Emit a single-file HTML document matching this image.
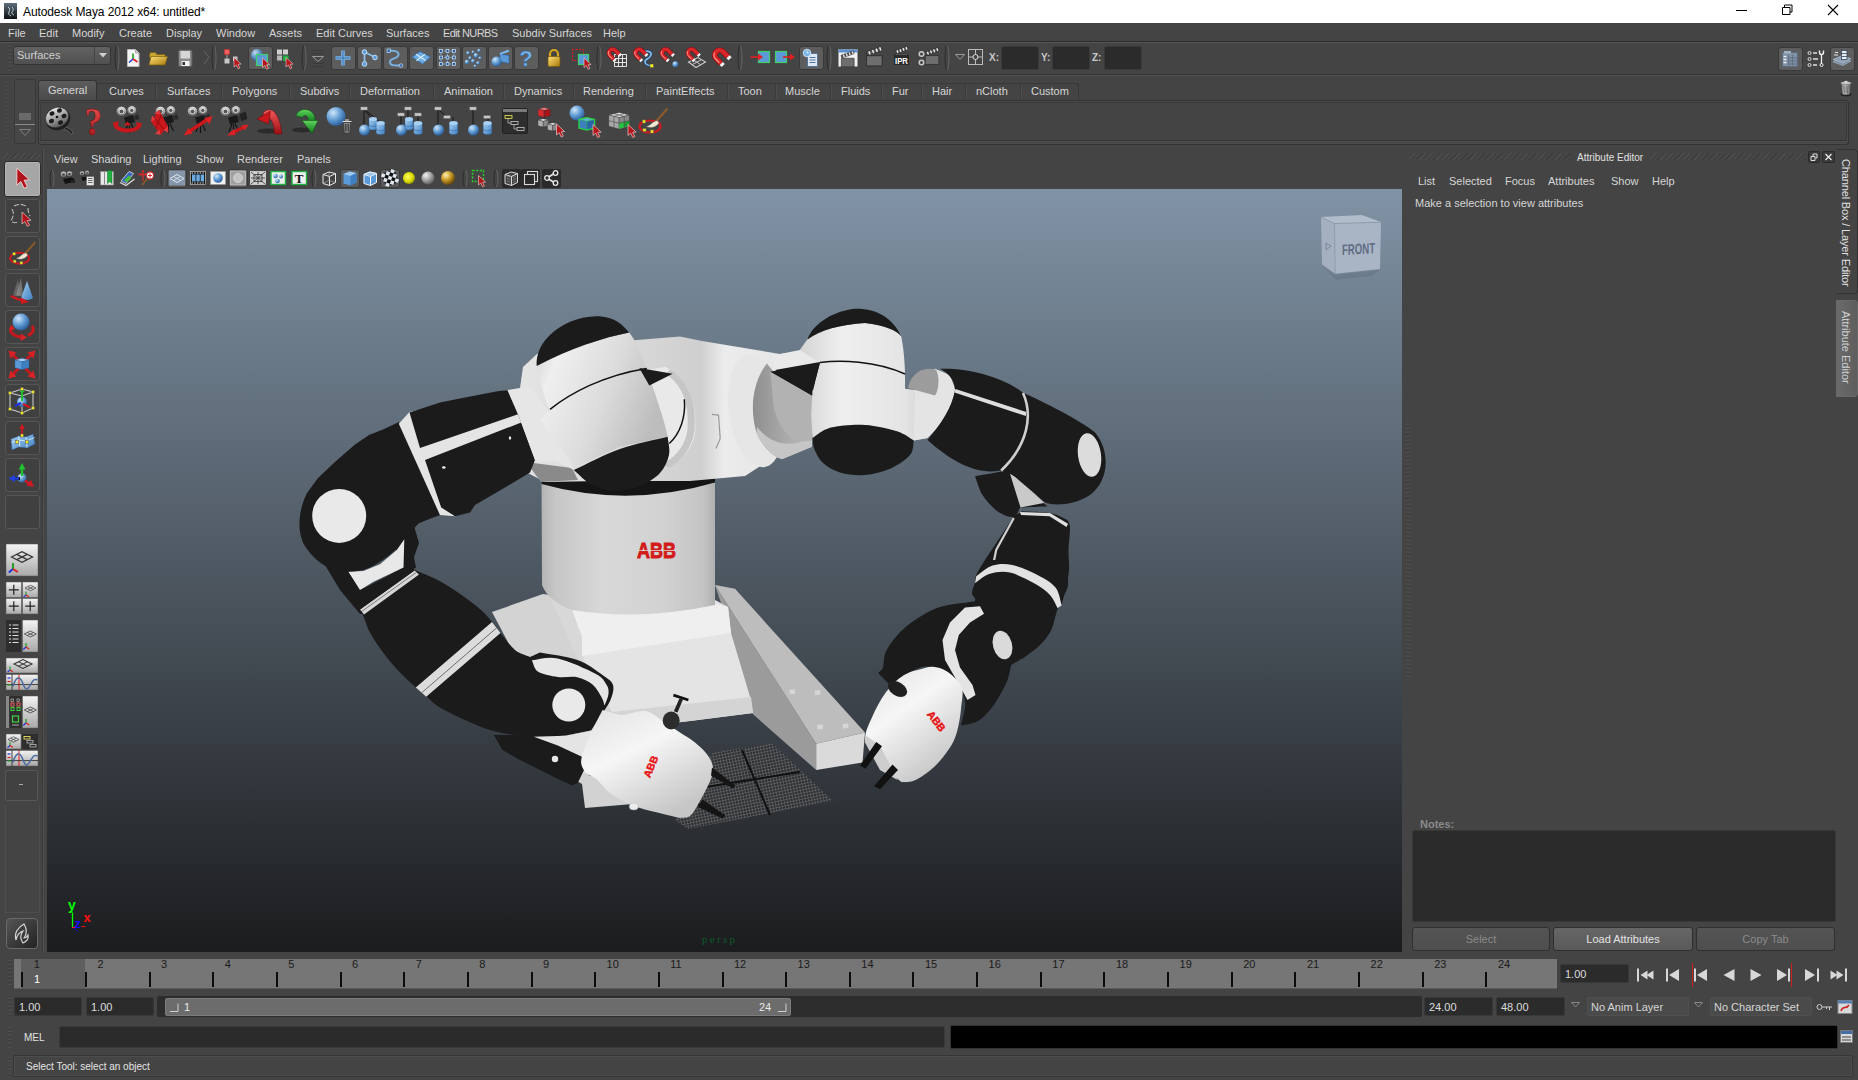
<!DOCTYPE html>
<html><head><meta charset="utf-8"><title>Autodesk Maya 2012 x64: untitled*</title>
<style>
*{box-sizing:border-box;margin:0;padding:0}
html,body{width:1858px;height:1080px;overflow:hidden;background:#444;font-family:"Liberation Sans","DejaVu Sans",sans-serif;font-size:11px;color:#d6d6d6}
.a{position:absolute}
.t{position:absolute;white-space:nowrap;line-height:14px;height:14px}
#title{left:0;top:0;width:1858px;height:23px;background:#fff;color:#000}
#title .t{font-size:12px;left:23px;top:5px;color:#000;letter-spacing:-0.1px}
.fld{position:absolute;background:#2b2b2b;border:1px solid #383838;border-radius:2px;color:#ddd;padding-left:4px;padding-top:1px;line-height:17px}
.hb{position:absolute;background:#5d5d5d;border:1px solid #393939;border-radius:3px}
.sep{position:absolute;width:3px;border-left:1px solid #2e2e2e;border-right:1px solid #5e5e5e}
.btn{position:absolute;border:1px solid #2f2f2f;border-radius:3px;text-align:center;line-height:22px;color:#8a8a8a;background:linear-gradient(#5a5a5a,#4c4c4c)}
.tb{position:absolute;left:5px;width:35px;height:34px;border:1px solid #565656;border-radius:3px;background:#404040}
svg{position:absolute;overflow:visible}
</style></head><body>
<div id="title" class="a"><div class="t">Autodesk Maya 2012 x64: untitled*</div>
<svg style="left:4px;top:3px" width="13" height="16"><defs><linearGradient id="gi" x1="0" y1="0" x2="0" y2="1"><stop offset="0" stop-color="#5d6f7c"/><stop offset="1" stop-color="#0c1014"/></linearGradient></defs><rect width="13" height="16" fill="url(#gi)"/><path d="M4 4c2 1 2 3 1 5s0 3 2 4M8 4c2 2 1 4 0 5s1 3 2 3" stroke="#c9d2d8" stroke-width="1" fill="none"/></svg>
<svg style="left:1730px;top:0" width="128" height="23"><path d="M6 10.5h11" stroke="#000" stroke-width="1"/><path d="M52.500 7.500h7.500v7h-7.500zM54.500 7.500v-2.500h7.500v7h-2" stroke="#000" stroke-width="1" fill="none"/><path d="M98 5l10 10M108 5l-10 10" stroke="#000" stroke-width="1.100"/></svg>
</div>
<div class="t" style="left:8px;top:26px">File</div>
<div class="t" style="left:39px;top:26px">Edit</div>
<div class="t" style="left:72px;top:26px">Modify</div>
<div class="t" style="left:119px;top:26px">Create</div>
<div class="t" style="left:166px;top:26px">Display</div>
<div class="t" style="left:216px;top:26px">Window</div>
<div class="t" style="left:269px;top:26px">Assets</div>
<div class="t" style="left:316px;top:26px">Edit Curves</div>
<div class="t" style="left:386px;top:26px">Surfaces</div>
<div class="t" style="left:443px;top:26px;letter-spacing:-0.6px">Edit NURBS</div>
<div class="t" style="left:512px;top:26px">Subdiv Surfaces</div>
<div class="t" style="left:603px;top:26px">Help</div>
<div class="a" style="left:0;top:41px;width:1858px;height:1px;background:#2c2c2c"></div>
<div class="a" style="left:0;top:42px;width:1858px;height:1px;background:#565656"></div>
<div class="a" style="left:13px;top:46px;width:98px;height:19px;border:1px solid #343434;border-radius:3px;background:linear-gradient(#626262,#505050)"><div class="t" style="left:3px;top:1px;color:#cfcfcf">Surfaces</div><div class="a" style="left:80px;top:0;width:1px;height:17px;background:#444"></div><svg style="left:85px;top:6px" width="9" height="5"><path d="M0 0h8l-4 4.500z" fill="#d0d0d0"/></svg></div>
<svg style="left:113px;top:46px" width="7" height="24"><path d="M3.500 0c-2 6-2 18 0 24" stroke="#2c2c2c" fill="none"/><path d="M4.500 0c2 6 2 18 0 24" stroke="#666" fill="none"/></svg>
<svg style="left:210px;top:46px" width="7" height="24"><path d="M3.500 0c-2 6-2 18 0 24" stroke="#2c2c2c" fill="none"/><path d="M4.500 0c2 6 2 18 0 24" stroke="#666" fill="none"/></svg>
<svg style="left:300px;top:46px" width="7" height="24"><path d="M3.500 0c-2 6-2 18 0 24" stroke="#2c2c2c" fill="none"/><path d="M4.500 0c2 6 2 18 0 24" stroke="#666" fill="none"/></svg>
<svg style="left:595px;top:46px" width="7" height="24"><path d="M3.500 0c-2 6-2 18 0 24" stroke="#2c2c2c" fill="none"/><path d="M4.500 0c2 6 2 18 0 24" stroke="#666" fill="none"/></svg>
<svg style="left:736px;top:46px" width="7" height="24"><path d="M3.500 0c-2 6-2 18 0 24" stroke="#2c2c2c" fill="none"/><path d="M4.500 0c2 6 2 18 0 24" stroke="#666" fill="none"/></svg>
<svg style="left:825px;top:46px" width="7" height="24"><path d="M3.500 0c-2 6-2 18 0 24" stroke="#2c2c2c" fill="none"/><path d="M4.500 0c2 6 2 18 0 24" stroke="#666" fill="none"/></svg>
<svg style="left:943px;top:46px" width="7" height="24"><path d="M3.500 0c-2 6-2 18 0 24" stroke="#2c2c2c" fill="none"/><path d="M4.500 0c2 6 2 18 0 24" stroke="#666" fill="none"/></svg>
<svg style="left:203px;top:49px" width="7" height="17"><path d="M1 2l5 6.500-5 6.500" stroke="#666" fill="none"/></svg>
<div class="hb" style="left:248px;top:46px;width:25px;height:24px"></div>
<div class="hb" style="left:331px;top:46px;width:25px;height:24px"></div>
<div class="hb" style="left:357px;top:46px;width:25px;height:24px"></div>
<div class="hb" style="left:383px;top:46px;width:25px;height:24px"></div>
<div class="hb" style="left:409px;top:46px;width:25px;height:24px"></div>
<div class="hb" style="left:435.5px;top:46px;width:25px;height:24px"></div>
<div class="hb" style="left:461.5px;top:46px;width:25px;height:24px"></div>
<div class="hb" style="left:487.5px;top:46px;width:25px;height:24px"></div>
<div class="hb" style="left:513.5px;top:46px;width:25px;height:24px"></div>
<div class="hb" style="left:799px;top:46px;width:25px;height:24px"></div>
<div class="hb" style="left:1778px;top:47px;width:25px;height:24px"></div>
<div class="hb" style="left:1830px;top:47px;width:25px;height:24px"></div>
<div class="t" style="left:989px;top:51px;font-weight:bold;font-size:10px;color:#c8c8c8">X:</div>
<div class="a" style="left:1001px;top:46px;width:38px;height:24px;background:#2b2b2b;border:1px solid #3a3a3a;border-radius:2px"></div>
<div class="t" style="left:1041px;top:51px;font-weight:bold;font-size:10px;color:#c8c8c8">Y:</div>
<div class="a" style="left:1052px;top:46px;width:38px;height:24px;background:#2b2b2b;border:1px solid #3a3a3a;border-radius:2px"></div>
<div class="t" style="left:1092px;top:51px;font-weight:bold;font-size:10px;color:#c8c8c8">Z:</div>
<div class="a" style="left:1104px;top:46px;width:38px;height:24px;background:#2b2b2b;border:1px solid #3a3a3a;border-radius:2px"></div>
<svg style="left:955px;top:49px" width="30" height="20"><path d="M0.500 5.500h9l-4.500 5z" stroke="#9a9a9a" fill="none"/><rect x="13.500" y="0.500" width="14" height="15" stroke="#bbb" fill="none"/><path d="M20.500 0v16M13 8h15" stroke="#bbb"/><circle cx="20.500" cy="8" r="2.500" stroke="#ddd" fill="#444"/></svg>
<div class="a" style="left:0;top:74px;width:1858px;height:1px;background:#333"></div>
<div class="a" style="left:0;top:75px;width:1858px;height:1px;background:#505050"></div>
<div class="a" style="left:38px;top:80px;width:59px;height:21px;background:linear-gradient(#5c5c5c,#4a4a4a);border:1px solid #333;border-bottom:none;border-radius:3px 3px 0 0"></div>
<div class="a" style="left:97px;top:83px;width:982px;height:17px;border-top:1px solid #383838;border-right:1px solid #383838;border-radius:0 3px 0 0"></div>
<div class="a" style="left:155px;top:84px;width:2px;height:15px;border-left:1px solid #3a3a3a;border-right:1px solid #4e4e4e"></div>
<div class="a" style="left:221px;top:84px;width:2px;height:15px;border-left:1px solid #3a3a3a;border-right:1px solid #4e4e4e"></div>
<div class="a" style="left:289px;top:84px;width:2px;height:15px;border-left:1px solid #3a3a3a;border-right:1px solid #4e4e4e"></div>
<div class="a" style="left:349px;top:84px;width:2px;height:15px;border-left:1px solid #3a3a3a;border-right:1px solid #4e4e4e"></div>
<div class="a" style="left:433px;top:84px;width:2px;height:15px;border-left:1px solid #3a3a3a;border-right:1px solid #4e4e4e"></div>
<div class="a" style="left:503px;top:84px;width:2px;height:15px;border-left:1px solid #3a3a3a;border-right:1px solid #4e4e4e"></div>
<div class="a" style="left:573px;top:84px;width:2px;height:15px;border-left:1px solid #3a3a3a;border-right:1px solid #4e4e4e"></div>
<div class="a" style="left:645px;top:84px;width:2px;height:15px;border-left:1px solid #3a3a3a;border-right:1px solid #4e4e4e"></div>
<div class="a" style="left:727px;top:84px;width:2px;height:15px;border-left:1px solid #3a3a3a;border-right:1px solid #4e4e4e"></div>
<div class="a" style="left:775px;top:84px;width:2px;height:15px;border-left:1px solid #3a3a3a;border-right:1px solid #4e4e4e"></div>
<div class="a" style="left:830px;top:84px;width:2px;height:15px;border-left:1px solid #3a3a3a;border-right:1px solid #4e4e4e"></div>
<div class="a" style="left:881px;top:84px;width:2px;height:15px;border-left:1px solid #3a3a3a;border-right:1px solid #4e4e4e"></div>
<div class="a" style="left:921px;top:84px;width:2px;height:15px;border-left:1px solid #3a3a3a;border-right:1px solid #4e4e4e"></div>
<div class="a" style="left:965px;top:84px;width:2px;height:15px;border-left:1px solid #3a3a3a;border-right:1px solid #4e4e4e"></div>
<div class="a" style="left:1020px;top:84px;width:2px;height:15px;border-left:1px solid #3a3a3a;border-right:1px solid #4e4e4e"></div>
<div class="t" style="left:48px;top:83px">General</div>
<div class="t" style="left:109px;top:84px">Curves</div>
<div class="t" style="left:167px;top:84px">Surfaces</div>
<div class="t" style="left:232px;top:84px">Polygons</div>
<div class="t" style="left:300px;top:84px">Subdivs</div>
<div class="t" style="left:360px;top:84px">Deformation</div>
<div class="t" style="left:444px;top:84px">Animation</div>
<div class="t" style="left:514px;top:84px">Dynamics</div>
<div class="t" style="left:583px;top:84px">Rendering</div>
<div class="t" style="left:656px;top:84px">PaintEffects</div>
<div class="t" style="left:738px;top:84px">Toon</div>
<div class="t" style="left:785px;top:84px">Muscle</div>
<div class="t" style="left:841px;top:84px">Fluids</div>
<div class="t" style="left:892px;top:84px">Fur</div>
<div class="t" style="left:932px;top:84px">Hair</div>
<div class="t" style="left:976px;top:84px">nCloth</div>
<div class="t" style="left:1031px;top:84px">Custom</div>
<div class="a" style="left:38px;top:100px;width:1811px;height:45px;border:1px solid #333;border-radius:3px;box-shadow:inset 0 0 0 1px #4a4a4a;background:#444"></div>
<div class="a" style="left:40px;top:102px;width:1807px;height:39px;border:1px solid #3a3a3a;border-radius:2px;border-bottom-color:#323232;box-shadow:0 1px 0 #505050"></div>
<div class="a" style="left:14px;top:79px;width:22px;height:65px;border:1px solid #383838;border-radius:2px;background:#464646"></div>
<svg style="left:14px;top:110px" width="22" height="32"><rect x="5" y="3" width="12" height="7" fill="#6a6a6a"/><path d="M1 14.500h20" stroke="#8a8a8a"/><path d="M5.500 19.500h11l-5.500 6z" stroke="#808080" fill="none"/></svg>
<svg style="left:1837.5px;top:78.5px" width="16" height="18"><defs><linearGradient id="trg" x1="0" x2="1"><stop offset="0" stop-color="#777"/><stop offset=".4" stop-color="#d8d8d8"/><stop offset="1" stop-color="#666"/></linearGradient></defs><ellipse cx="8" cy="15.500" rx="5.500" ry="1.800" fill="#222"/><path d="M3.500 4.500l1 11h7l1-11z" fill="url(#trg)"/><ellipse cx="8" cy="4" rx="5.300" ry="1.600" fill="#c8c8c8" stroke="#555" stroke-width=".5"/><path d="M6.500 2.500h3" stroke="#ddd" stroke-width="1.200"/><path d="M6 6.500l.4 8M8 6.500v8M10 6.500l-.4 8" stroke="#444" stroke-width=".7"/></svg>
<div class="a" style="left:8px;top:46px;width:4px;height:26px;background:repeating-linear-gradient(#525252 0 1px,#3c3c3c 1px 2px,#444 2px 4px);opacity:.8"></div>
<div class="a" style="left:5px;top:82px;width:4px;height:60px;background:repeating-linear-gradient(#525252 0 1px,#3c3c3c 1px 2px,#444 2px 4px);opacity:.8"></div>
<div class="a" style="left:1406px;top:420px;width:4px;height:260px;background:repeating-linear-gradient(#525252 0 1px,#3c3c3c 1px 2px,#444 2px 4px);opacity:.8"></div>
<div class="a" style="left:8px;top:960px;width:4px;height:28px;background:repeating-linear-gradient(#525252 0 1px,#3c3c3c 1px 2px,#444 2px 4px);opacity:.8"></div>
<div class="a" style="left:8px;top:998px;width:4px;height:18px;background:repeating-linear-gradient(#525252 0 1px,#3c3c3c 1px 2px,#444 2px 4px);opacity:.8"></div>
<div class="a" style="left:8px;top:1027px;width:4px;height:21px;background:repeating-linear-gradient(#525252 0 1px,#3c3c3c 1px 2px,#444 2px 4px);opacity:.8"></div>
<div class="a" style="left:8px;top:1057px;width:4px;height:19px;background:repeating-linear-gradient(#525252 0 1px,#3c3c3c 1px 2px,#444 2px 4px);opacity:.8"></div>
<svg width="0" height="0"><defs>
<radialGradient id="bsph" cx=".35" cy=".3" r=".8"><stop offset="0" stop-color="#cfe6fa"/><stop offset=".5" stop-color="#5f9ad2"/><stop offset="1" stop-color="#1f4f8a"/></radialGradient>
<radialGradient id="gsph" cx=".35" cy=".3" r=".8"><stop offset="0" stop-color="#f2f2f2"/><stop offset=".5" stop-color="#a0a0a0"/><stop offset="1" stop-color="#4a4a4a"/></radialGradient>
<radialGradient id="ysph" cx=".4" cy=".4" r=".7"><stop offset="0" stop-color="#ffff60"/><stop offset=".6" stop-color="#d8d800"/><stop offset="1" stop-color="#777700"/></radialGradient>
<radialGradient id="osph" cx=".35" cy=".3" r=".8"><stop offset="0" stop-color="#fff0b0"/><stop offset=".45" stop-color="#c89a28"/><stop offset="1" stop-color="#4a3200"/></radialGradient>
<linearGradient id="bcube" x1="0" y1="0" x2="1" y2="1"><stop offset="0" stop-color="#a8d0f2"/><stop offset="1" stop-color="#3d7fc0"/></linearGradient>
<linearGradient id="redg" x1="0" y1="0" x2="0" y2="1"><stop offset="0" stop-color="#f25a5a"/><stop offset="1" stop-color="#9c0f14"/></linearGradient>
<linearGradient id="grng" x1="0" y1="0" x2="0" y2="1"><stop offset="0" stop-color="#5fd35f"/><stop offset="1" stop-color="#0c7a16"/></linearGradient>
<linearGradient id="gold" x1="0" y1="0" x2="1" y2="1"><stop offset="0" stop-color="#ffe27a"/><stop offset="1" stop-color="#a87808"/></linearGradient>
<linearGradient id="lbtn" x1="0" y1="0" x2="0" y2="1"><stop offset="0" stop-color="#f4f4f4"/><stop offset="1" stop-color="#a8a8a8"/></linearGradient>
<linearGradient id="cam" x1="0" y1="0" x2="0" y2="1"><stop offset="0" stop-color="#e8e8e8"/><stop offset="1" stop-color="#555"/></linearGradient>
</defs></svg>
<svg style="left:121px;top:46px" width="24" height="24" viewBox="0 0 24 24"><path d="M6.500 3.500h8l3.500 3.500v13.500h-11.500z" fill="#f4f4f4" stroke="#bbb"/><path d="M14.500 3.500v3.500h3.500" fill="#ccc" stroke="#999" stroke-width=".7"/><path d="M12 13V7.500" stroke="#1c9c1c" stroke-width="1.600"/><path d="M12 13l-4 3.500" stroke="#1c3ce0" stroke-width="1.600"/><path d="M12 13l4.500 3" stroke="#e01c1c" stroke-width="1.600"/></svg>
<svg style="left:146px;top:46px" width="24" height="24" viewBox="0 0 24 24"><path d="M3.500 8.500l1-2h5l1.500 2h8v3h-15.500z" fill="#c8a432" stroke="#7a6010" stroke-width=".7"/><path d="M3 19l2-8.500h16.500l-2.500 8.500z" fill="url(#gold)" stroke="#7a6010" stroke-width=".7"/></svg>
<svg style="left:173px;top:46px" width="24" height="24" viewBox="0 0 24 24"><path d="M5.500 5.500a1.500 1.500 0 0 1 1.500-1.500h10.500a1.500 1.500 0 0 1 1.500 1.500v13.500a1.500 1.500 0 0 1-1.500 1.500h-10.500a1.500 1.500 0 0 1-1.500-1.500z" fill="#8a8a8a" stroke="#5a5a5a"/><rect x="7.500" y="5" width="9.500" height="7.500" fill="#d6d6d6"/><rect x="8.500" y="15" width="8" height="5" fill="#f0f0f0"/><rect x="9.500" y="16" width="2.500" height="3" fill="#333"/></svg>
<svg style="left:221px;top:46px" width="24" height="24" viewBox="0 0 24 24"><rect x="3.500" y="3.500" width="5" height="5" fill="#f06060" stroke="#c03030" stroke-width=".6"/><path d="M6 9v3" stroke="#aaa"/><rect x="3.500" y="12.500" width="5" height="5" fill="#c8c8c8"/><rect x="12" y="10.500" width="4.500" height="4.500" fill="#c8c8c8"/><path d="M13 11.5l0 9.500 2.300-2 1.800 3.800 1.800-.8-1.800-3.700 3-.2z" fill="#b4161c" stroke="#f0d0d0" stroke-width=".6"/></svg>
<svg style="left:248px;top:46px" width="24" height="24" viewBox="0 0 24 24"><circle cx="9" cy="9" r="6" fill="url(#bsph)" opacity=".9"/><rect x="8.500" y="8.500" width="11" height="11" fill="#5b9ad8" stroke="#3fd06a" stroke-width="1.200"/><path d="M14.5 12l0 9.500 2.300-2 1.800 3.800 1.800-.8-1.800-3.700 3-.2z" fill="#b4161c" stroke="#f0d0d0" stroke-width=".6"/></svg>
<svg style="left:274px;top:46px" width="24" height="24" viewBox="0 0 24 24"><rect x="3" y="3.500" width="5" height="5" fill="#cfcfcf"/><rect x="9" y="3.500" width="5" height="5" fill="#cfcfcf"/><rect x="3" y="9.500" width="5" height="5" fill="#b8b8b8"/><rect x="9" y="9.500" width="5.500" height="5.500" fill="#20b040"/><path d="M12 11.5l0 9.500 2.300-2 1.800 3.800 1.800-.8-1.800-3.700 3-.2z" fill="#b4161c" stroke="#f0d0d0" stroke-width=".6"/></svg>
<svg style="left:306px;top:46px" width="24" height="24" viewBox="0 0 24 24"><path d="M6 4.500h12M7 7.500h10M6 17.500h12M7 20.500h10" stroke="#3a3a3a"/><path d="M6.500 10.500h11l-5.500 5z" fill="none" stroke="#9a9a9a"/></svg>
<svg style="left:331px;top:46px" width="24" height="24" viewBox="0 0 24 24"><path d="M12 4.500v15M4.500 12h15" stroke="#7ab4e6" stroke-width="3.600"/><path d="M12 5v14M5 12h14" stroke="#2c66a8" stroke-width=".8"/></svg>
<svg style="left:357px;top:46px" width="24" height="24" viewBox="0 0 24 24"><path d="M7.500 6v12M7.500 6l10 5" stroke="#8cc0ea" stroke-width="1.800"/><circle cx="7.5" cy="6" r="2.3" fill="#5a9ad6" stroke="#bfe0fa" stroke-width="1"/><circle cx="7.5" cy="18" r="2.3" fill="#5a9ad6" stroke="#bfe0fa" stroke-width="1"/><circle cx="18" cy="11.5" r="2.3" fill="#5a9ad6" stroke="#bfe0fa" stroke-width="1"/></svg>
<svg style="left:383px;top:46px" width="24" height="24" viewBox="0 0 24 24"><path d="M6 4.500c8 0 11 2 9 5.500s-8 2-8 6 5 3.500 10 3.500" fill="none" stroke="#7ab4e6" stroke-width="1.800"/><rect x="4" y="3" width="3.400" height="3.400" fill="#3a6aa8" stroke="#bfe0fa" stroke-width=".7"/><circle cx="18" cy="19.500" r="1.800" fill="#3a6aa8" stroke="#bfe0fa" stroke-width=".7"/></svg>
<svg style="left:409px;top:46px" width="24" height="24" viewBox="0 0 24 24"><path d="M3 11l8-5.500 10.500 5.500-8 7z" fill="#6aaae0" stroke="#2c66a8" stroke-width=".7"/><path d="M7 8.200l9.500 6.300M16 8.200l-8.500 6.500" stroke="#d6ecfb" stroke-width="1.100"/></svg>
<svg style="left:435.5px;top:46px" width="24" height="24" viewBox="0 0 24 24"><rect x="5" y="5" width="13" height="13" fill="none" stroke="#7ab4e6" stroke-dasharray="2 1.200"/><path d="M5 11.500h13M11.500 5v13" stroke="#7ab4e6" stroke-dasharray="2 1.200"/><rect x="3.6" y="3.6" width="2.800" height="2.800" fill="#2c5a98" stroke="#cfe6fa" stroke-width=".7"/><rect x="3.6" y="10.1" width="2.800" height="2.800" fill="#2c5a98" stroke="#cfe6fa" stroke-width=".7"/><rect x="3.6" y="16.6" width="2.800" height="2.800" fill="#2c5a98" stroke="#cfe6fa" stroke-width=".7"/><rect x="10.1" y="3.6" width="2.800" height="2.800" fill="#2c5a98" stroke="#cfe6fa" stroke-width=".7"/><rect x="10.1" y="10.1" width="2.800" height="2.800" fill="#2c5a98" stroke="#cfe6fa" stroke-width=".7"/><rect x="10.1" y="16.6" width="2.800" height="2.800" fill="#2c5a98" stroke="#cfe6fa" stroke-width=".7"/><rect x="16.6" y="3.6" width="2.800" height="2.800" fill="#2c5a98" stroke="#cfe6fa" stroke-width=".7"/><rect x="16.6" y="10.1" width="2.800" height="2.800" fill="#2c5a98" stroke="#cfe6fa" stroke-width=".7"/><rect x="16.6" y="16.6" width="2.800" height="2.800" fill="#2c5a98" stroke="#cfe6fa" stroke-width=".7"/></svg>
<svg style="left:461.5px;top:46px" width="24" height="24" viewBox="0 0 24 24"><circle cx="6" cy="7" r="1.8" fill="url(#bsph)"/><circle cx="11" cy="6" r="1.5" fill="url(#bsph)"/><circle cx="17" cy="4.5" r="1.7" fill="url(#bsph)"/><circle cx="14" cy="9.5" r="2.4" fill="url(#bsph)"/><circle cx="8" cy="12" r="1.7" fill="url(#bsph)"/><circle cx="18" cy="12" r="1.6" fill="url(#bsph)"/><circle cx="5" cy="16" r="2.3" fill="url(#bsph)"/><circle cx="11" cy="15" r="2" fill="url(#bsph)"/><circle cx="16" cy="17" r="1.8" fill="url(#bsph)"/><circle cx="13" cy="20" r="1.5" fill="url(#bsph)"/></svg>
<svg style="left:487.5px;top:46px" width="24" height="24" viewBox="0 0 24 24"><path d="M12 8l9 1.500v8l-9-2z" fill="#5b9ad8" stroke="#2c5a98" stroke-width=".6"/><path d="M11.500 7l9-3.500.7 2.200-9 3.300z" fill="#7ab4e6"/><circle cx="8.500" cy="15.500" r="5" fill="url(#bsph)"/></svg>
<svg style="left:513.5px;top:46px" width="24" height="24" viewBox="0 0 24 24"><text x="12" y="20" text-anchor="middle" font-family="Liberation Sans,sans-serif" font-weight="bold" font-size="22" fill="#7ab4e6" stroke="#2c66a8" stroke-width=".5">?</text></svg>
<svg style="left:542px;top:46px" width="24" height="24" viewBox="0 0 24 24"><path d="M8 11V8a4 4 0 0 1 8 0v3" fill="none" stroke="#d8a818" stroke-width="2.200"/><rect x="6" y="10.500" width="12" height="10" rx="1.500" fill="url(#gold)" stroke="#7a5808" stroke-width=".7"/></svg>
<svg style="left:569px;top:46px" width="24" height="24" viewBox="0 0 24 24"><rect x="3.500" y="3.500" width="11" height="11" fill="none" stroke="#e02020" stroke-dasharray="2 1.300"/><rect x="9.500" y="8.500" width="10" height="10" fill="#5b9ad8" stroke="#3fd06a" stroke-width="1.200"/><path d="M15 12l0 9.500 2.300-2 1.800 3.800 1.800-.8-1.800-3.700 3-.2z" fill="#b4161c" stroke="#f0d0d0" stroke-width=".6"/></svg>
<svg style="left:604px;top:46px" width="24" height="24" viewBox="0 0 24 24"><path d="M10.500 8.500v12M14.500 8.500v12M18.500 8.500v12M22.500 8.500v12M10.500 8.500h12M10.500 12.500h12M10.500 16.500h12M10.500 20.500h12" stroke="#e4e4e4" stroke-width="1"/><g transform="translate(9.3 7.7) rotate(-45) scale(1.0)"><path d="M-3.700 4.500V-1a3.700 3.700 0 0 1 7.400 0V4.500" fill="none" stroke="#8a0c10" stroke-width="4.400"/><path d="M-3.700 4.500V-1a3.700 3.700 0 0 1 7.400 0V4.500" fill="none" stroke="#d8262a" stroke-width="3.400"/><path d="M-4.300 3V-1a4.300 4.300 0 0 1 3-4.100" fill="none" stroke="#f48a80" stroke-width="1"/><path d="M-3.700 4.500v2.200M3.700 4.500v2.200" stroke="#f4f4f4" stroke-width="3.400"/></g></svg>
<svg style="left:632px;top:46px" width="24" height="24" viewBox="0 0 24 24"><path d="M12.500 5.500c5-1 8 1 6 4.500s-6 3-5.500 6 3 3.500 6 3.500" fill="none" stroke="#244a78" stroke-width="3"/><path d="M12.500 5.500c5-1 8 1 6 4.500s-6 3-5.500 6 3 3.500 6 3.500" fill="none" stroke="#8cc0ea" stroke-width="1.500"/><rect x="18" y="18" width="3.600" height="3.600" fill="#f0f020" stroke="#444" stroke-width=".5"/><g transform="translate(7.8 7.7) rotate(-45) scale(1.0)"><path d="M-3.700 4.500V-1a3.700 3.700 0 0 1 7.400 0V4.500" fill="none" stroke="#8a0c10" stroke-width="4.400"/><path d="M-3.700 4.500V-1a3.700 3.700 0 0 1 7.400 0V4.500" fill="none" stroke="#d8262a" stroke-width="3.400"/><path d="M-4.300 3V-1a4.300 4.300 0 0 1 3-4.100" fill="none" stroke="#f48a80" stroke-width="1"/><path d="M-3.700 4.500v2.200M3.700 4.500v2.200" stroke="#f4f4f4" stroke-width="3.400"/></g></svg>
<svg style="left:655px;top:46px" width="24" height="24" viewBox="0 0 24 24"><circle cx="20.400" cy="18.300" r="3" fill="url(#bsph)"/><g transform="translate(11.3 7.7) rotate(-45) scale(1.0)"><path d="M-3.700 4.500V-1a3.700 3.700 0 0 1 7.400 0V4.500" fill="none" stroke="#8a0c10" stroke-width="4.400"/><path d="M-3.700 4.500V-1a3.700 3.700 0 0 1 7.400 0V4.500" fill="none" stroke="#d8262a" stroke-width="3.400"/><path d="M-4.300 3V-1a4.300 4.300 0 0 1 3-4.100" fill="none" stroke="#f48a80" stroke-width="1"/><path d="M-3.700 4.500v2.200M3.700 4.500v2.200" stroke="#f4f4f4" stroke-width="3.400"/></g></svg>
<svg style="left:683px;top:46px" width="24" height="24" viewBox="0 0 24 24"><path d="M5.500 16l9.500-4.500 7.500 4.500-9.500 5.500z" fill="none" stroke="#c8c8c8" stroke-width="1.100"/><path d="M10.300 13.800l7.500 5M18.700 13.600l-9.500 5" stroke="#c8c8c8" stroke-width="1"/><g transform="translate(9.3 7.7) rotate(-45) scale(1.0)"><path d="M-3.700 4.500V-1a3.700 3.700 0 0 1 7.400 0V4.500" fill="none" stroke="#8a0c10" stroke-width="4.400"/><path d="M-3.700 4.500V-1a3.700 3.700 0 0 1 7.400 0V4.500" fill="none" stroke="#d8262a" stroke-width="3.400"/><path d="M-4.300 3V-1a4.300 4.300 0 0 1 3-4.100" fill="none" stroke="#f48a80" stroke-width="1"/><path d="M-3.700 4.500v2.200M3.700 4.500v2.200" stroke="#f4f4f4" stroke-width="3.400"/></g></svg>
<svg style="left:709px;top:46px" width="24" height="24" viewBox="0 0 24 24"><g transform="translate(11.5 10) rotate(-45) scale(1.3)"><path d="M-3.700 4.500V-1a3.700 3.700 0 0 1 7.400 0V4.500" fill="none" stroke="#8a0c10" stroke-width="4.400"/><path d="M-3.700 4.500V-1a3.700 3.700 0 0 1 7.400 0V4.500" fill="none" stroke="#d8262a" stroke-width="3.400"/><path d="M-4.300 3V-1a4.300 4.300 0 0 1 3-4.100" fill="none" stroke="#f48a80" stroke-width="1"/><path d="M-3.700 4.500v2.200M3.700 4.500v2.200" stroke="#f4f4f4" stroke-width="3.400"/></g></svg>
<svg style="left:749px;top:46px" width="24" height="24" viewBox="0 0 24 24"><rect x="9.500" y="5.500" width="11" height="11" fill="#5b9ad8" stroke="#3fd06a" stroke-width="1.200"/><path d="M1.500 11h9" stroke="#e02020" stroke-width="1.600"/><path d="M9 7.500l5 3.500-5 3.500z" fill="#e02020"/></svg>
<svg style="left:772px;top:46px" width="24" height="24" viewBox="0 0 24 24"><rect x="3.500" y="5.500" width="11" height="11" fill="#5b9ad8" stroke="#3fd06a" stroke-width="1.200"/><path d="M11 11h8" stroke="#e02020" stroke-width="1.600"/><path d="M18 7.500l5 3.500-5 3.500z" fill="#e02020"/></svg>
<svg style="left:799px;top:46px" width="24" height="24" viewBox="0 0 24 24"><path d="M8.500 7.500h10v13h-10z" fill="#dfe8f2" stroke="#456a98" stroke-width=".8"/><path d="M10.500 11.500h6M10.500 14h6M10.500 16.500h6" stroke="#456a98" stroke-width=".9"/><circle cx="8" cy="7" r="3.800" fill="#7ab4e6" stroke="#dfeefa" stroke-width=".8"/><path d="M8 4.800V7h1.800" stroke="#fff" stroke-width=".8" fill="none"/></svg>
<svg style="left:836px;top:46px" width="24" height="24" viewBox="0 0 24 24"><rect x="2.500" y="3.500" width="19" height="17" fill="#f2f2f2" stroke="#9a9a9a" stroke-width=".6"/><rect x="2.500" y="3.500" width="19" height="3" fill="#5a8fd0"/><g transform="translate(.500 1.500) scale(.98)"><path d="M5 11h13v8.500h-13z" fill="#6e6e6e" stroke="#222" stroke-width=".6"/><path d="M4.500 8l12.500-4.500 1 2.800-12.500 4.500z" fill="#555" stroke="#222" stroke-width=".5"/><path d="M7 7.300l1 2.700M10 6.200l1 2.700M13 5.100l1 2.700M16 4l1 2.700" stroke="#e8e8e8" stroke-width="1.300"/></g></svg>
<svg style="left:863px;top:46px" width="24" height="24" viewBox="0 0 24 24"><g transform="translate(-2.500 -3.500) scale(1.200)"><path d="M5 11h13v8.500h-13z" fill="#6e6e6e" stroke="#222" stroke-width=".6"/><path d="M4.500 8l12.500-4.500 1 2.800-12.500 4.500z" fill="#555" stroke="#222" stroke-width=".5"/><path d="M7 7.300l1 2.700M10 6.200l1 2.700M13 5.100l1 2.700M16 4l1 2.700" stroke="#e8e8e8" stroke-width="1.300"/></g></svg>
<svg style="left:890px;top:46px" width="24" height="24" viewBox="0 0 24 24"><g transform="translate(0 -3)"><path d="M5 11h13v8.500h-13z" fill="#6e6e6e" stroke="#222" stroke-width=".6"/><path d="M4.500 8l12.500-4.500 1 2.800-12.500 4.500z" fill="#555" stroke="#222" stroke-width=".5"/><path d="M7 7.300l1 2.700M10 6.200l1 2.700M13 5.100l1 2.700M16 4l1 2.700" stroke="#e8e8e8" stroke-width="1.300"/></g><rect x="4" y="9" width="15" height="10" fill="#2a2a2a"/><text x="11.500" y="18" text-anchor="middle" font-family="Liberation Sans,sans-serif" font-weight="bold" font-size="9.500" fill="#fff" textLength="13" lengthAdjust="spacingAndGlyphs">IPR</text></svg>
<svg style="left:917px;top:46px" width="24" height="24" viewBox="0 0 24 24"><g transform="translate(3 -2) scale(1.050)"><path d="M5 11h13v8.500h-13z" fill="#6e6e6e" stroke="#222" stroke-width=".6"/><path d="M4.500 8l12.500-4.500 1 2.800-12.500 4.500z" fill="#555" stroke="#222" stroke-width=".5"/><path d="M7 7.300l1 2.700M10 6.200l1 2.700M13 5.100l1 2.700M16 4l1 2.700" stroke="#e8e8e8" stroke-width="1.300"/></g><circle cx="4.500" cy="8" r="2.300" fill="none" stroke="#c8c8c8" stroke-width="1.500"/><circle cx="4.500" cy="16.500" r="2.300" fill="none" stroke="#c8c8c8" stroke-width="1.500"/></svg>
<svg style="left:1778px;top:47px" width="24" height="24" viewBox="0 0 24 24"><rect x="4.500" y="5.500" width="15" height="14" fill="#7f90a4" stroke="#5a6a7e" stroke-width=".8"/><rect x="6" y="4" width="7" height="2.500" fill="#9fb0c4"/><path d="M5.500 9.500h3M5.500 12.500h3M5.500 15.500h3" stroke="#e8eef4" stroke-width="1.300"/><path d="M10.500 8v10.500M14.500 8v10.500M10.500 11h8.500M10.500 14h8.500M10.500 17h8.500" stroke="#5a6a7e" stroke-width=".8"/></svg>
<svg style="left:1804px;top:47px" width="24" height="24" viewBox="0 0 24 24"><circle cx="5.500" cy="6" r="1.500" fill="none" stroke="#e0e0e0" stroke-width="1"/><circle cx="5.500" cy="12" r="1.500" fill="none" stroke="#e0e0e0" stroke-width="1"/><circle cx="5.500" cy="18" r="1.500" fill="none" stroke="#e0e0e0" stroke-width="1"/><path d="M9 6h4M9 12h5M9 18h4" stroke="#e0e0e0" stroke-width="1.300"/><path d="M17.500 8v9" stroke="#f0f0f0" stroke-width="1.300"/><path d="M15.500 3.500v2a2 2 0 0 0 4 0v-2" fill="none" stroke="#f0f0f0" stroke-width="1.400"/><circle cx="17.500" cy="18" r="1.500" fill="none" stroke="#f0f0f0" stroke-width="1"/></svg>
<svg style="left:1830px;top:47px" width="24" height="24" viewBox="0 0 24 24"><path d="M3 15l8-3.500 10 2.500-8 4.500z" fill="#7f90a4" stroke="#a8b8c8" stroke-width=".6"/><path d="M3 12.500l8-3.500 10 2.500-8 4.500z" fill="#8fa0b4" stroke="#b8c8d8" stroke-width=".6"/><path d="M4 8h4M5 5.500h3" stroke="#e0e8f0" stroke-width="1"/><rect x="11.500" y="3.500" width="5.500" height="9" fill="#e4ecf4" stroke="#3a4658" stroke-width=".8"/><path d="M11.500 6.500h5.500M11.500 9.500h5.500" stroke="#3a4658" stroke-width=".8"/></svg>
<svg style="left:43px;top:104px" width="34" height="34" viewBox="0 0 34 34"><path d="M22 23c4 1 7 3 8 6l-2 1.500c-1-3-4-4.500-7-5z" fill="#222" stroke="#888" stroke-width=".5"/><ellipse cx="15" cy="15" rx="12.500" ry="11" fill="#1e1e1e" transform="rotate(-25 15 15)"/><ellipse cx="14" cy="13.500" rx="12" ry="10" fill="url(#cam)" stroke="#222" stroke-width=".7" transform="rotate(-25 14 13.500)"/><ellipse cx="9" cy="9.5" rx="2.600" ry="2.100" fill="#1c1c1c" transform="rotate(-25 9 9.5)"/><ellipse cx="16.5" cy="6.5" rx="2.600" ry="2.100" fill="#1c1c1c" transform="rotate(-25 16.5 6.5)"/><ellipse cx="21" cy="12" rx="2.600" ry="2.100" fill="#1c1c1c" transform="rotate(-25 21 12)"/><ellipse cx="17.5" cy="18.5" rx="2.600" ry="2.100" fill="#1c1c1c" transform="rotate(-25 17.5 18.5)"/><ellipse cx="8.5" cy="17" rx="2.600" ry="2.100" fill="#1c1c1c" transform="rotate(-25 8.5 17)"/><circle cx="14" cy="13" r="1.300" fill="#111"/></svg>
<svg style="left:75.5px;top:104px" width="34" height="34" viewBox="0 0 34 34"><text x="8.500" y="30.500" font-family="Liberation Serif,serif" font-weight="bold" font-size="39" fill="url(#redg)" stroke="#7a0a0e" stroke-width=".5" textLength="17.500" lengthAdjust="spacingAndGlyphs">?</text></svg>
<svg style="left:111px;top:104px" width="34" height="34" viewBox="0 0 34 34"><circle cx="10.5" cy="7.5" r="5.2" fill="url(#cam)" stroke="#333" stroke-width=".6"/><circle cx="10.5" cy="7.5" r="2.3400000000000003" fill="#555" stroke="#eee" stroke-width=".8"/><circle cx="20.8" cy="6.5" r="4.7" fill="url(#cam)" stroke="#333" stroke-width=".6"/><circle cx="20.8" cy="6.5" r="2.115" fill="#555" stroke="#eee" stroke-width=".8"/><path d="M13 13.500l9-2.500 2 7-9 2.500z" fill="#1a1a1a"/><path d="M23 12.500l4-2.500 1.500 5-4 1z" fill="#2a2a2a"/><path d="M17 20l-3 8M18.500 20l0 9M20 19.500l3.500 7.500" stroke="#111" stroke-width="1.100"/><path d="M4 20c2 8 20 9 25 1" fill="none" stroke="#c8181c" stroke-width="4"/><path d="M1.500 19l6-2-.5 6.500zM31.500 19.500l-6.500-1.500 1.500 6.500z" fill="#c8181c"/><path d="M13 21.500l3.500-4 3.500 4z" fill="#c8181c"/></svg>
<svg style="left:147px;top:104px" width="34" height="34" viewBox="0 0 34 34"><g transform="translate(3 0)"><circle cx="10.5" cy="7.5" r="5.2" fill="url(#cam)" stroke="#333" stroke-width=".6"/><circle cx="10.5" cy="7.5" r="2.3400000000000003" fill="#555" stroke="#eee" stroke-width=".8"/><circle cx="20.8" cy="6.5" r="4.7" fill="url(#cam)" stroke="#333" stroke-width=".6"/><circle cx="20.8" cy="6.5" r="2.115" fill="#555" stroke="#eee" stroke-width=".8"/><path d="M13 13.500l9-2.500 2 7-9 2.500z" fill="#1a1a1a"/><path d="M23 12.500l4-2.500 1.500 5-4 1z" fill="#2a2a2a"/><path d="M17 20l-3 8M18.500 20l0 9M20 19.500l3.500 7.500" stroke="#111" stroke-width="1.100"/></g><path d="M4 17.500l8-11.500 9 16.500-7.500 8.500z" fill="#c8181c"/><path d="M12 6l-5 3.500 6.500 1zM21 22.500l.5 6-5.500-2zM4 17.500l1-6 4 3.500zM13.500 31l-5.500-1.500 4.500-4z" fill="#e03a3e"/><path d="M7 13l10 13M15 9.500l-6.500 15" stroke="#7a0a0e" stroke-width=".7"/></svg>
<svg style="left:181.5px;top:104px" width="34" height="34" viewBox="0 0 34 34"><circle cx="10.5" cy="7.5" r="5.2" fill="url(#cam)" stroke="#333" stroke-width=".6"/><circle cx="10.5" cy="7.5" r="2.3400000000000003" fill="#555" stroke="#eee" stroke-width=".8"/><circle cx="20.8" cy="6.5" r="4.7" fill="url(#cam)" stroke="#333" stroke-width=".6"/><circle cx="20.8" cy="6.5" r="2.115" fill="#555" stroke="#eee" stroke-width=".8"/><path d="M13 13.500l9-2.500 2 7-9 2.500z" fill="#1a1a1a"/><path d="M23 12.500l4-2.500 1.500 5-4 1z" fill="#2a2a2a"/><path d="M17 20l-3 8M18.500 20l0 9M20 19.500l3.500 7.500" stroke="#111" stroke-width="1.100"/><path d="M5 29l21-14" stroke="#c8181c" stroke-width="3.600"/><path d="M1.500 31.500l9-2-4-5.500zM30.500 12l-3 8.500-5-6.500z" fill="#d82226"/></svg>
<svg style="left:217px;top:104px" width="34" height="34" viewBox="0 0 34 34"><g transform="translate(-2 0)"><circle cx="10.5" cy="7.5" r="5.2" fill="url(#cam)" stroke="#333" stroke-width=".6"/><circle cx="10.5" cy="7.5" r="2.3400000000000003" fill="#555" stroke="#eee" stroke-width=".8"/><circle cx="20.8" cy="6.5" r="4.7" fill="url(#cam)" stroke="#333" stroke-width=".6"/><circle cx="20.8" cy="6.5" r="2.115" fill="#555" stroke="#eee" stroke-width=".8"/><path d="M13 13.500l9-2.500 2 7-9 2.500z" fill="#1a1a1a"/><path d="M23 12.500l4-2.500 1.500 5-4 1z" fill="#2a2a2a"/><path d="M17 20l-3 8M18.500 20l0 9M20 19.500l3.500 7.500" stroke="#111" stroke-width="1.100"/></g><path d="M22 10l7-3 2 8-7 3z" fill="#222" stroke="#555" stroke-width=".5"/><path d="M14 29.500l14-7" stroke="#c8181c" stroke-width="3.200"/><path d="M10 31.500l7-6.500 1.500 6zM32 20.500l-7.500 1 3 5z" fill="#d82226"/></svg>
<svg style="left:253px;top:104px" width="34" height="34" viewBox="0 0 34 34"><ellipse cx="15" cy="27" rx="11" ry="2.500" fill="#1a1a1a" opacity=".6"/><path d="M10 9C16 2 26 5 29 30h-7.500c-1-13-4-18-8-14z" fill="url(#redg)" stroke="#6a0a0e" stroke-width=".5"/><path d="M4 15l13.500-8-2 13z" fill="#c8181c" stroke="#6a0a0e" stroke-width=".5"/></svg>
<svg style="left:289px;top:104px" width="34" height="34" viewBox="0 0 34 34"><ellipse cx="13" cy="26" rx="10" ry="2.500" fill="#1a1a1a" opacity=".6"/><path d="M7 12c2-9 17-9 19 2l-.5 4h-7l.5-3c0-4-4-4.500-5.500-1.500z" fill="url(#grng)" stroke="#0a4a10" stroke-width=".5"/><path d="M13 16.500h16l-6 13z" fill="url(#grng)" stroke="#0a4a10" stroke-width=".5"/></svg>
<svg style="left:323px;top:104px" width="34" height="34" viewBox="0 0 34 34"><circle cx="13" cy="12.500" r="9.500" fill="url(#bsph)"/><path d="M19.500 17.500h9M22 16h4" stroke="#ddd" stroke-width="1.200"/><path d="M20.500 18.500h7l-.8 10.500h-5.400z" fill="#8a8a8a" stroke="#333" stroke-width=".6"/><path d="M22.500 20v7.500M24 20v7.500M25.500 20v7.500" stroke="#333" stroke-width=".8"/></svg>
<svg style="left:356px;top:104px" width="34" height="34" viewBox="0 0 34 34"><path d="M8 5v20M8 5l8 10M8 5l16 13" stroke="#111" stroke-width=".9"/><rect x="4.5" y="2.9" width="7" height="3.200" fill="#c8c8c8" stroke="#555" stroke-width=".5"/><path d="M13.0 15v9a4.0 2 0 0 0 8 0v-9z" fill="url(#bcube)" stroke="#2c5a98" stroke-width=".4"/><ellipse cx="17" cy="15" rx="4.0" ry="2" fill="#a8d0f2"/><path d="M13.0 20.5a4.0 2 0 0 0 8 0" fill="none" stroke="#2c5a98" stroke-width=".5"/><path d="M20.25 19v9.5a4.25 2 0 0 0 8.5 0v-9.5z" fill="url(#bcube)" stroke="#2c5a98" stroke-width=".4"/><ellipse cx="24.5" cy="19" rx="4.25" ry="2" fill="#a8d0f2"/><path d="M20.25 24.75a4.25 2 0 0 0 8.5 0" fill="none" stroke="#2c5a98" stroke-width=".5"/><circle cx="8.5" cy="26" r="5.5" fill="url(#bsph)"/></svg>
<svg style="left:392.5px;top:104px" width="34" height="34" viewBox="0 0 34 34"><path d="M15 5v10M8 11v14M25 11v8" stroke="#111" stroke-width=".9"/><rect x="11.5" y="2.9" width="7" height="3.200" fill="#c8c8c8" stroke="#555" stroke-width=".5"/><rect x="4.5" y="8.9" width="7" height="3.200" fill="#c8c8c8" stroke="#555" stroke-width=".5"/><rect x="21.5" y="8.9" width="7" height="3.200" fill="#c8c8c8" stroke="#555" stroke-width=".5"/><path d="M12.0 15v9a4.0 2 0 0 0 8 0v-9z" fill="url(#bcube)" stroke="#2c5a98" stroke-width=".4"/><ellipse cx="16" cy="15" rx="4.0" ry="2" fill="#a8d0f2"/><path d="M12.0 20.5a4.0 2 0 0 0 8 0" fill="none" stroke="#2c5a98" stroke-width=".5"/><path d="M20.75 19v9.5a4.25 2 0 0 0 8.5 0v-9.5z" fill="url(#bcube)" stroke="#2c5a98" stroke-width=".4"/><ellipse cx="25" cy="19" rx="4.25" ry="2" fill="#a8d0f2"/><path d="M20.75 24.75a4.25 2 0 0 0 8.5 0" fill="none" stroke="#2c5a98" stroke-width=".5"/><circle cx="8.5" cy="26" r="5.5" fill="url(#bsph)"/></svg>
<svg style="left:428.6px;top:104px" width="34" height="34" viewBox="0 0 34 34"><path d="M9 5v20M9 5l9 8M24 13v6" stroke="#111" stroke-width=".9"/><rect x="5.5" y="2.9" width="7" height="3.200" fill="#c8c8c8" stroke="#555" stroke-width=".5"/><rect x="14.5" y="11.4" width="7" height="3.200" fill="#c8c8c8" stroke="#555" stroke-width=".5"/><path d="M20.25 19v9.5a4.25 2 0 0 0 8.5 0v-9.5z" fill="url(#bcube)" stroke="#2c5a98" stroke-width=".4"/><ellipse cx="24.5" cy="19" rx="4.25" ry="2" fill="#a8d0f2"/><path d="M20.25 24.75a4.25 2 0 0 0 8.5 0" fill="none" stroke="#2c5a98" stroke-width=".5"/><circle cx="9.5" cy="26" r="5.5" fill="url(#bsph)"/></svg>
<svg style="left:464px;top:104px" width="34" height="34" viewBox="0 0 34 34"><path d="M9 5v20M24 13v6" stroke="#111" stroke-width=".9"/><rect x="5.5" y="2.9" width="7" height="3.200" fill="#c8c8c8" stroke="#555" stroke-width=".5"/><rect x="19.5" y="11.4" width="7" height="3.200" fill="#c8c8c8" stroke="#555" stroke-width=".5"/><path d="M19.25 19v9.5a4.25 2 0 0 0 8.5 0v-9.5z" fill="url(#bcube)" stroke="#2c5a98" stroke-width=".4"/><ellipse cx="23.5" cy="19" rx="4.25" ry="2" fill="#a8d0f2"/><path d="M19.25 24.75a4.25 2 0 0 0 8.5 0" fill="none" stroke="#2c5a98" stroke-width=".5"/><circle cx="9.5" cy="26" r="5.5" fill="url(#bsph)"/></svg>
<svg style="left:498.4px;top:104px" width="34" height="34" viewBox="0 0 34 34"><rect x="4.500" y="4.500" width="25" height="25" rx="1.500" fill="#2e2e2e" stroke="#222"/><rect x="5" y="5" width="24" height="3" fill="#7a7a7a"/><rect x="7" y="11.500" width="7" height="3" fill="#3a3a20" stroke="#e8e060" stroke-width=".8"/><rect x="13" y="17.500" width="7" height="3" fill="none" stroke="#c8c8c8" stroke-width=".8"/><rect x="19" y="23.500" width="7" height="3" fill="none" stroke="#c8c8c8" stroke-width=".8"/><path d="M10 14.500v4.500h3M16 20.500v4.500h3" stroke="#c8c8c8" stroke-width=".7" fill="none"/></svg>
<svg style="left:533px;top:104px" width="34" height="34" viewBox="0 0 34 34"><path d="M11 10v8l7 4" stroke="#111" stroke-width=".8" fill="none"/><path d="M5 5l6.2 -1.55l6.2 1.55l-6.2 1.55z" fill="#f47878" stroke="#333" stroke-width=".4"/><path d="M5 5l6.2 1.55v6.820000000000001l-6.2 -1.55z" fill="#d82a2e" stroke="#333" stroke-width=".4"/><path d="M11.2 6.55l6.2 -1.55v6.820000000000001l-6.2 1.55z" fill="#a81418" stroke="#333" stroke-width=".4"/><path d="M5 16l5.2 -1.3l5.2 1.3l-5.2 1.3z" fill="#e8e8e8" stroke="#333" stroke-width=".4"/><path d="M5 16l5.2 1.3v5.720000000000001l-5.2 -1.3z" fill="#b0b0b0" stroke="#333" stroke-width=".4"/><path d="M10.2 17.3l5.2 -1.3v5.720000000000001l-5.2 1.3z" fill="#8a8a8a" stroke="#333" stroke-width=".4"/><path d="M14.5 20l5.2 -1.3l5.2 1.3l-5.2 1.3z" fill="#e8e8e8" stroke="#333" stroke-width=".4"/><path d="M14.5 20l5.2 1.3v5.720000000000001l-5.2 -1.3z" fill="#b0b0b0" stroke="#333" stroke-width=".4"/><path d="M19.7 21.3l5.2 -1.3v5.720000000000001l-5.2 1.3z" fill="#8a8a8a" stroke="#333" stroke-width=".4"/><g transform="translate(23.5 20) scale(1.150)"><path d="M0 0l0 9.500 2.300-2 1.800 3.800 1.800-.8-1.800-3.700 3-.2z" fill="#b4161c" stroke="#f0d0d0" stroke-width=".6"/></g></svg>
<svg style="left:568px;top:104px" width="34" height="34" viewBox="0 0 34 34"><circle cx="9" cy="9" r="7.5" fill="url(#bsph)"/><path d="M11 15.5l7.8 -1.95l7.8 1.95l-7.8 1.95z" fill="#6aaae0" stroke="#28d048" stroke-width=".4"/><path d="M11 15.5l7.8 1.95v8.58l-7.8 -1.95z" fill="#3d7fc0" stroke="#28d048" stroke-width=".4"/><path d="M18.8 17.45l7.8 -1.95v8.58l-7.8 1.95z" fill="#2c66a8" stroke="#28d048" stroke-width=".4"/><path d="M11 15.500l7.800-1.950 7.800 1.950v8.600l-7.800 1.950-7.800-1.950z" fill="none" stroke="#28d048" stroke-width="1.300"/><g transform="translate(25 20.5) scale(1.150)"><path d="M0 0l0 9.500 2.300-2 1.800 3.800 1.800-.8-1.800-3.700 3-.2z" fill="#b4161c" stroke="#f0d0d0" stroke-width=".6"/></g></svg>
<svg style="left:603.4px;top:104px" width="34" height="34" viewBox="0 0 34 34"><path d="M5.8 11l10.3 -2.575l10.3 2.575l-10.3 2.575z" fill="#e4e4e4" stroke="#333" stroke-width=".4"/><path d="M5.8 11l10.3 2.575v11.330000000000002l-10.3 -2.575z" fill="#a8a8a8" stroke="#333" stroke-width=".4"/><path d="M16.1 13.575l10.3 -2.575v11.330000000000002l-10.3 2.575z" fill="#8a8a8a" stroke="#333" stroke-width=".4"/><path d="M16.100 13.600l10.300 -2.600v11.300l-10.300 2.600z" fill="none"/><path d="M16.100 19.200l5.150-1.300v5.700l-5.150 1.300z" fill="#28c040"/><path d="M21.250 17.900l5.150-1.300v5.700l-5.150 1.300z" fill="#18a030"/><path d="M10.950 9.700l10.300 2.600M10.950 12.300l10.300-2.600M5.800 16.650l10.300 2.600 10.300-2.600M10.950 12.300v11.300M21.250 12.300v11.300" stroke="#444" stroke-width=".6" fill="none"/><g transform="translate(25 20.5) scale(1.150)"><path d="M0 0l0 9.500 2.300-2 1.800 3.800 1.800-.8-1.800-3.700 3-.2z" fill="#b4161c" stroke="#f0d0d0" stroke-width=".6"/></g></svg>
<svg style="left:636px;top:104px" width="34" height="34" viewBox="0 0 34 34"><ellipse cx="14" cy="22.500" rx="10.500" ry="6" fill="none" stroke="#d01820" stroke-width="2.200"/><path d="M31.500 4.500l-11.500 13" stroke="#8a5a2a" stroke-width="2.200"/><path d="M21 16.500c-5 1-6 5-11 6 5 2.500 12 0 13-4z" fill="#f0e8d0" stroke="#555" stroke-width=".5"/><rect x="6.4" y="15.9" width="3.200" height="3.200" fill="#f0e820" stroke="#555" stroke-width=".5"/><rect x="6.9" y="24.4" width="3.200" height="3.200" fill="#f0e820" stroke="#555" stroke-width=".5"/><rect x="14.4" y="25.9" width="3.200" height="3.200" fill="#f0e820" stroke="#555" stroke-width=".5"/></svg>
<div class="a" style="left:2px;top:153px;width:38px;height:6px;background:repeating-linear-gradient(135deg,#4e4e4e 0 1px,#3c3c3c 1px 2px,#444 2px 4px)"></div>
<div class="a" style="left:42px;top:148px;width:2px;height:806px;border-left:1px solid #3a3a3a;border-right:1px solid #505050"></div>
<div class="a" style="left:4px;top:161px;width:37px;height:36px;background:#a6a6a6;border:1px solid #2b2b2b;border-radius:3px;box-shadow:inset 0 0 0 1px #b4b4b4"></div>
<div class="tb" style="top:199px"></div>
<div class="tb" style="top:236px"></div>
<div class="tb" style="top:273px"></div>
<div class="tb" style="top:310px"></div>
<div class="tb" style="top:347px"></div>
<div class="tb" style="top:384px"></div>
<div class="tb" style="top:421px"></div>
<div class="tb" style="top:458px"></div>
<div class="tb" style="top:495px"></div>
<div class="a" style="left:5px;top:770px;width:33px;height:31px;border:1px solid #575757;border-radius:2px;background:#414141"></div><div class="a" style="left:19px;top:784px;width:4px;height:1px;background:#aaa"></div>
<div class="a" style="left:5px;top:805px;width:35px;height:108px;border:1px solid #4e4e4e;border-top:none;"></div>
<div class="a" style="left:6px;top:918px;width:32px;height:31px;border:1px solid #6a6a6a;border-radius:4px;background:linear-gradient(135deg,#555,#222)"></div>
<svg style="left:8px;top:920px" width="28" height="28"><path d="M16 4c-6 3-10 9-8 16 1-5 4-8 7-9-3 4-3 8 0 12 3-1 6-4 5-8-1 2-2 3-4 3 3-4 3-9 0-14z" fill="none" stroke="#d8d8d8" stroke-width="1.200"/></svg>
<div class="t" style="left:54px;top:152px">View</div>
<div class="t" style="left:91px;top:152px">Shading</div>
<div class="t" style="left:143px;top:152px">Lighting</div>
<div class="t" style="left:196px;top:152px">Show</div>
<div class="t" style="left:237px;top:152px">Renderer</div>
<div class="t" style="left:297px;top:152px">Panels</div>
<svg style="left:48px;top:170px" width="7" height="17"><path d="M3.500 0c-2 4-2 13 0 17" stroke="#2c2c2c" fill="none"/><path d="M4.500 0c2 4 2 13 0 17" stroke="#666" fill="none"/></svg>
<svg style="left:159px;top:170px" width="7" height="17"><path d="M3.500 0c-2 4-2 13 0 17" stroke="#2c2c2c" fill="none"/><path d="M4.500 0c2 4 2 13 0 17" stroke="#666" fill="none"/></svg>
<svg style="left:310px;top:170px" width="7" height="17"><path d="M3.500 0c-2 4-2 13 0 17" stroke="#2c2c2c" fill="none"/><path d="M4.500 0c2 4 2 13 0 17" stroke="#666" fill="none"/></svg>
<svg style="left:461px;top:170px" width="7" height="17"><path d="M3.500 0c-2 4-2 13 0 17" stroke="#2c2c2c" fill="none"/><path d="M4.500 0c2 4 2 13 0 17" stroke="#666" fill="none"/></svg>
<svg style="left:492px;top:170px" width="7" height="17"><path d="M3.500 0c-2 4-2 13 0 17" stroke="#2c2c2c" fill="none"/><path d="M4.500 0c2 4 2 13 0 17" stroke="#666" fill="none"/></svg>
<div class="hb" style="left:167.4px;top:169px;width:20px;height:19px;background:#5a5a5a;border-color:#3a3a3a"></div>
<div class="hb" style="left:228.3px;top:169px;width:20px;height:19px;background:#5a5a5a;border-color:#3a3a3a"></div>
<div class="hb" style="left:340px;top:169px;width:20px;height:19px;background:#5a5a5a;border-color:#3a3a3a"></div>
<div class="hb" style="left:379.9px;top:169px;width:20px;height:19px;background:#5a5a5a;border-color:#3a3a3a"></div>
<div id="vp" class="a" style="left:47px;top:189px;width:1355px;height:763px;background:linear-gradient(#8093a5,#1b1c1e);overflow:hidden">
<svg style="left:-47px;top:-189px" width="1858" height="1080" viewBox="0 0 1858 1080">
<defs>
<linearGradient id="gcyl" x1="0" x2="1" y1="0" y2="0"><stop offset="0" stop-color="#b4b4b4"/><stop offset=".08" stop-color="#c6c6c6"/><stop offset=".35" stop-color="#d8d8d8"/><stop offset=".7" stop-color="#d2d2d2"/><stop offset=".93" stop-color="#c4c4c4"/><stop offset="1" stop-color="#b0b0b0"/></linearGradient>
<linearGradient id="gtor" x1="0" x2="1" y1="0" y2="0"><stop offset="0" stop-color="#e4e4e4"/><stop offset=".45" stop-color="#d6d6d6"/><stop offset=".62" stop-color="#cfcfcf"/><stop offset=".7" stop-color="#ececec"/><stop offset="1" stop-color="#e2e2e2"/></linearGradient>
<linearGradient id="gcapL" x1="0" x2="1" y1="0" y2=".4"><stop offset="0" stop-color="#d0d0d0"/><stop offset=".2" stop-color="#efefef"/><stop offset=".6" stop-color="#dcdcdc"/><stop offset="1" stop-color="#bdbdbd"/></linearGradient>
<linearGradient id="gcapR" x1="0" x2="1" y1="0" y2="0"><stop offset="0" stop-color="#d4d4d4"/><stop offset=".3" stop-color="#efefef"/><stop offset=".75" stop-color="#e4e4e4"/><stop offset="1" stop-color="#c4c4c4"/></linearGradient>
<linearGradient id="ghand" x1="0" x2=".6" y1="0" y2="1"><stop offset="0" stop-color="#e2e2e2"/><stop offset=".45" stop-color="#f6f6f6"/><stop offset="1" stop-color="#c6c6c6"/></linearGradient>
<linearGradient id="gdisc" x1="0" x2="1" y1="0" y2="0"><stop offset="0" stop-color="#8f8f8f"/><stop offset=".5" stop-color="#a8a8a8"/><stop offset="1" stop-color="#bdbdbd"/></linearGradient>
<pattern id="mesh" width="3" height="3" patternUnits="userSpaceOnUse" patternTransform="rotate(-12)"><rect width="3" height="3" fill="#2a2d32"/><path d="M0 .5h3M.5 0v3" stroke="#666" stroke-width=".7"/></pattern>
</defs>
<path d="M 712.0,753.0 L 772.0,743.0 L 833.0,801.0 L 688.0,829.0 L 675.0,820.0 Z" fill="url(#mesh)" />
<path d="M 700.0,788.0 L 800.0,772.0 M 742.0,750.0 L 770.0,815.0 M 690.0,800.0 L 720.0,815.0" fill="none" stroke="#111" stroke-width="2"/>
<path d="M 492.0,612.0 L 543.0,594.0 L 585.0,600.0 L 625.0,720.0 L 600.0,765.0 L 582.0,782.0 Z" fill="#d3d3d3" />
<path d="M 572.0,778.0 L 640.0,768.0 L 645.0,803.0 L 585.0,808.0 L 582.0,784.0 Z" fill="#d2d2d2" />
<path d="M 715.0,585.0 L 816.2,743.8 L 816.2,770.0 L 752.5,713.8 L 727.5,622.5 Z" fill="#9b9b9b" />
<path d="M 715.0,585.0 L 735.0,588.8 L 865.0,732.5 L 816.2,743.8 Z" fill="#bdbdbd" />
<path d="M 816.2,743.8 L 865.0,732.5 L 862.5,762.5 L 816.2,770.0 Z" fill="#dadada" />
<path d="M 789.2,689.8 L 794.8,689.2 L 795.0,693.8 L 789.5,694.2 Z" fill="#d6d6d6" />
<path d="M 814.8,690.5 L 820.2,690.0 L 820.5,694.5 L 815.0,695.0 Z" fill="#d6d6d6" />
<path d="M 817.2,725.0 L 822.8,724.5 L 823.0,729.0 L 817.5,729.5 Z" fill="#d6d6d6" />
<path d="M 842.8,724.0 L 848.2,723.5 L 848.5,728.0 L 843.0,728.5 Z" fill="#d6d6d6" />
<path d="M 550.0,597.0 L 572.0,610.0 L 715.0,600.0 L 728.0,607.0 L 731.0,633.0 L 751.0,700.0 L 753.0,713.0 L 690.0,721.0 L 640.0,727.0 L 612.0,712.0 L 582.0,656.0 L 582.0,637.0 Z" fill="#e4e4e4" />
<path d="M 572.0,610.0 L 715.0,604.0 L 728.0,607.0 L 731.0,633.0 L 582.0,656.0 L 582.0,637.0 Z" fill="#efefef" />
<path d="M 612.0,712.0 L 751.0,697.0 L 753.0,713.0 L 690.0,721.0 L 640.0,727.0 Z" fill="#d4d4d4" />
<path d="M 550.0,597.0 L 572.0,610.0 L 582.0,637.0 L 582.0,656.0 L 612.0,712.0 L 596.0,700.0 Z" fill="#d8d8d8" />
<path d="M 541.5,470.0 L 542.0,585.0 Q 548.0,601.0 572.0,610.0 Q 640.0,621.0 715.0,605.0 L 715.0,470.0 Z" fill="url(#gcyl)" />
<path d="M 541.0,468.0 L 541.5,484.0 Q 628.0,508.0 715.0,482.5 L 715.0,468.0 Z" fill="#151515" />
<text x="637" y="558" font-family="Liberation Sans,sans-serif" font-weight="bold" font-size="21.500" fill="#d31a1a" stroke="#d31a1a" stroke-width=".9" textLength="39" lengthAdjust="spacingAndGlyphs">ABB</text>
<path d="M637 550.500h39" stroke="#d8d8d8" stroke-width=".8"/>
<path d="M 520.0,388.0 L 523.0,367.0 L 537.0,354.0 L 560.0,346.0 L 637.0,340.0 L 680.0,336.5 L 702.0,341.0 L 780.0,354.0 L 800.0,352.0 L 812.0,446.0 L 790.0,451.0 L 765.0,463.0 L 745.0,476.0 L 690.0,481.0 L 600.0,481.0 L 545.0,482.0 L 522.0,470.0 Z" fill="url(#gtor)" />
<path d="M 526.0,462.0 L 572.0,468.0 L 578.0,480.0 L 541.0,482.0 Z" fill="#8a8a8a" />
<path d="M 666.8,366.7 C 686.8,378.4 697.7,400.1 696.0,431.8 C 693.5,450.2 680.2,463.5 666.8,469.3 L 663.5,460.2 L 656.8,400.1 L 646.8,370.1 Z" fill="#e9e9e9" />
<path d="M 671.0,373.4 C 686.8,385.1 692.7,403.4 691.0,430.1 C 688.8,446.8 678.5,458.5 668.5,464.3" fill="none" stroke="#c2c2c2" stroke-width="7" stroke-linecap="round" opacity=".9"/>
<path d="M 666.8,366.7 C 686.8,378.4 697.7,400.1 696.0,431.8 C 693.5,450.2 680.2,463.5 666.8,469.3" fill="none" stroke="#d0d0d0" stroke-width="1.500"/>
<path d="M 684.3,399.3 C 686.0,416.8 680.2,433.5 669.3,443.5" fill="none" stroke="#111" stroke-width="1.500"/>
<path d="M 711.9,414.3 L 718.5,415.1 L 720.2,438.5 L 716.0,448.5" fill="none" stroke="#9a9a9a" stroke-width="1.200"/>
<ellipse cx="756.1" cy="411.0" rx="27.5" ry="56.7" fill="#e6e6e6" transform="rotate(-8 756.1 411.0)" />
<path d="M 766.9,363.4 C 753.6,380.1 748.6,408.4 756.9,433.5 C 763.6,448.5 773.6,456.8 781.9,459.3 L 812.0,446.8 L 813.6,393.4 L 773.6,371.7 Z" fill="url(#gdisc)" />
<path d="M 756.9,433.5 C 763.6,448.5 773.6,456.8 781.9,459.3 L 812.0,446.8 L 812.0,438.5 C 787.0,448.5 770.3,443.5 756.9,426.8 Z" fill="#c6c6c6" />
<path d="M 770.3,371.7 L 830.0,360.1 L 830.0,393.4 L 813.6,396.8 Z" fill="#1a1a1a" />
<path d="M 770.3,372.1 L 813.6,396.8 L 812.0,440.2 C 795.3,445.2 780.3,433.5 773.6,406.8 Z" fill="#b2b2b2" />
<path d="M 404.0,528.0 L 414.0,526.0 L 419.0,543.0 L 414.0,557.0 L 416.0,568.0 L 400.0,572.0 L 396.0,550.0 Z" fill="#1b1b1c" />
<path d="M 322.0,560.0 L 348.0,572.0 L 362.0,590.0 L 372.0,612.0 L 360.0,614.0 L 340.0,590.0 Z" fill="#1b1b1c" />
<path d="M322.5,560.0 C329.8,560.0 342.7,560.0 350.0,560.0 C352.7,568.0 357.3,582.0 360.0,590.0 C374.7,584.7 400.3,575.3 415.0,570.0 C421.7,573.0 431.7,576.7 440.0,581.2 C448.3,585.8 457.5,592.1 465.0,597.5 C472.5,602.9 479.2,607.9 485.0,613.8 C490.8,619.6 495.0,626.5 500.0,632.5 C505.0,638.5 510.0,645.9 515.0,650.0 C520.0,654.1 526.0,655.1 530.0,657.0 C532.7,655.8 537.3,653.7 540.0,652.5 C550.0,654.5 567.1,656.2 577.5,660.0 C587.9,663.8 596.6,670.8 602.5,675.0 C608.4,679.2 611.7,680.8 613.0,685.0 C614.3,689.2 612.5,695.0 610.5,700.0 C608.5,705.0 604.5,709.9 601.2,715.0 C598.0,720.1 593.9,726.4 591.2,730.5 C584.2,731.8 573.5,734.5 565.0,735.5 C556.5,736.5 548.3,736.6 540.0,736.5 C531.7,736.4 523.3,736.1 515.0,735.0 C506.7,733.9 498.3,732.5 490.0,730.0 C481.7,727.5 473.3,723.8 465.0,720.0 C456.7,716.2 446.5,711.5 440.0,707.5 C433.5,703.5 432.5,701.7 426.2,696.2 C420.0,690.8 409.4,681.9 402.5,675.0 C395.6,668.1 390.4,662.1 385.0,655.0 C379.6,647.9 373.8,639.4 370.0,632.5 C366.2,625.6 365.4,620.4 362.5,613.8 C359.6,607.1 359.2,601.5 352.5,592.5 C345.8,583.5 330.5,568.7 322.5,560.0 Z" fill="#1b1b1c" />
<path d="M 360.0,609.5 L 414.5,570.5 L 419.0,574.5 L 364.0,614.5 Z" fill="#d6d6d6" />
<path d="M 361.2,611.8 L 416.2,572.5" fill="none" stroke="#222" stroke-width=".5"/>
<path d="M 492.0,622.0 L 415.8,687.5 L 426.2,696.8 L 500.5,633.0 Z" fill="#dcdcdc" />
<path d="M 496.5,628.0 L 422.0,692.5" fill="none" stroke="#222" stroke-width=".6"/>
<path d="M531.8,660.2 C538.7,659.8 547.1,656.2 557.8,658.5 C568.4,660.8 587.4,669.4 595.5,673.8 C603.6,678.1 604.3,681.4 606.5,684.8 C608.7,688.1 608.8,690.5 608.5,694.0 C608.2,697.5 605.6,702.4 604.5,705.5 C603.8,703.4 603.7,701.2 601.8,697.8 C599.8,694.3 596.8,688.2 592.8,684.8 C588.7,681.3 583.1,678.5 577.2,677.2 C571.4,676.0 564.2,677.9 557.8,677.0 C551.2,676.1 542.6,674.5 538.2,671.8 C533.9,669.0 533.5,663.3 531.8,660.2 Z" fill="#e6e6e6" />
<ellipse cx="568.8" cy="705.0" rx="16.5" ry="16.5" fill="#e9e9e9" />
<path d="M 493.8,735.0 L 502.5,750.0 L 520.0,760.0 L 540.0,770.0 L 560.0,780.0 L 572.5,785.5 L 578.0,782.5 L 590.0,757.5 L 595.5,735.0 L 590.0,731.0 L 565.0,735.5 L 540.0,736.5 L 515.0,735.0 Z" fill="#1b1b1c" />
<path d="M 533.8,736.8 L 565.0,735.8 L 591.5,730.5 L 596.2,732.5 L 586.2,758.8 L 557.8,745.5 Z" fill="#e4e4e4" />
<ellipse cx="555.0" cy="759.0" rx="3.2" ry="3.2" fill="#e8e8e8" />
<path d="M 326.7,566.8 L 348.4,571.8 L 360.1,590.2 L 403.5,567.6 L 413.0,565.5 L 414.5,570.5 L 360.0,609.5 L 352.0,600.0 Z" fill="#1b1b1c" />
<path d="M 404.3,539.3 L 396.8,550.0 L 380.0,564.3 L 363.4,571.0 L 348.4,571.8 L 360.0,590.0 L 373.4,581.8 L 403.5,567.6 Z" fill="#e8e8e8" />
<path d="M 399.0,422.0 L 383.0,429.5 L 369.0,435.0 L 355.0,444.5 L 336.0,461.0 L 318.0,478.0 L 307.0,493.0 C 302.0,503.0 299.0,515.0 299.5,527.0 C 300.0,535.0 302.0,540.0 303.4,543.4 C 308.0,552.0 318.0,562.0 326.7,566.8 C 334.0,570.0 350.0,573.0 363.4,570.0 C 372.0,568.0 390.0,556.0 396.8,548.5 L 404.3,538.4 L 418.5,523.4 L 426.8,520.0 L 440.0,515.0 Z" fill="#1b1b1c" />
<ellipse cx="339.2" cy="515.9" rx="27.0" ry="27.0" fill="#e9e9e9" />
<path d="M 398.8,423.8 L 409.5,412.0 L 507.5,390.0 L 521.2,422.5 L 535.0,460.0 L 455.0,516.2 L 440.0,515.0 Z" fill="#e4e4e4" />
<path d="M 409.5,412.5 L 440.0,402.5 L 465.0,397.5 L 497.5,391.2 L 507.5,390.0 L 518.0,414.2 L 420.0,448.0 Z" fill="#1b1b1c" />
<path d="M 425.0,460.0 L 521.2,422.5 L 535.0,460.0 L 530.0,472.5 L 505.0,487.5 L 475.0,505.0 L 470.0,512.5 L 455.0,516.2 L 441.2,507.5 Z" fill="#1b1b1c" />
<ellipse cx="510.0" cy="438.0" rx="1.2" ry="1.8" fill="#eee" />
<ellipse cx="443.8" cy="467.5" rx="1.8" ry="1.2" fill="#eee" />
<path d="M 507.5,390.0 L 530.0,386.2 L 550.0,412.5 L 573.8,470.0 L 555.0,460.0 L 537.5,462.5 L 535.0,460.0 L 521.2,422.5 L 518.0,414.2 Z" fill="#e6e6e6" />
<path d="M 536.7,365.9 C 540.0,383.4 545.0,400.1 550.0,410.1 L 540.0,420.1 L 575.1,466.8 L 620.1,446.8 L 667.7,436.8 C 665.2,423.5 658.5,403.4 646.8,370.1 C 640.1,350.1 635.1,340.0 629.3,332.5 C 603.4,337.5 570.1,348.4 536.7,365.9 Z" fill="url(#gcapL)" />
<path d="M 536.7,365.9 C 535.9,350.1 545.0,333.4 570.1,321.7 C 586.7,315.0 606.8,313.3 620.1,323.4 C 625.1,327.5 628.4,331.7 629.3,332.5 C 603.4,337.5 570.1,348.4 536.7,365.9 Z" fill="#1b1b1c" />
<path d="M 550.0,409.3 C 570.1,393.4 603.4,375.1 646.8,368.4" fill="none" stroke="#111" stroke-width="1.500"/>
<path d="M 639.3,368.1 L 672.7,373.7 L 649.3,385.4 Z" fill="#1b1b1c" />
<path d="M573.8,470.0 C586.1,464.4 604.3,454.5 620.0,449.0 C635.7,443.5 655.0,440.1 667.7,436.8 C668.0,441.7 670.3,449.0 669.0,455.0 C667.7,461.0 664.8,467.8 660.0,473.0 C655.2,478.2 647.5,483.0 640.0,486.0 C632.5,489.0 623.0,491.2 615.0,491.0 C607.0,490.8 598.9,488.5 592.0,485.0 C585.1,481.5 578.6,474.0 573.8,470.0 Z" fill="#1b1b1c" />
<path d="M 772.5,355.5 L 800.0,350.0 L 807.5,339.5 L 820.0,330.0 L 820.0,363.0 L 775.0,370.5 Z" fill="#e9e9e9" />
<path d="M 807.5,339.5 C 820.0,330.0 840.0,324.5 865.0,323.0 C 885.0,325.0 897.5,331.2 901.2,336.2 C 904.5,352.5 905.5,372.5 905.0,388.8 L 915.0,390.0 L 935.0,395.5 L 940.0,425.0 L 927.5,438.0 L 913.8,440.5 L 897.5,431.5 L 865.0,425.0 L 830.0,427.5 L 812.5,438.0 L 811.2,415.0 L 812.5,390.0 L 820.0,363.0 L 800.0,350.0 Z" fill="url(#gcapR)" />
<path d="M 807.5,339.5 C 812.5,325.0 830.0,312.5 852.5,309.0 C 875.0,307.5 892.5,317.5 901.2,336.2 C 897.5,331.2 885.0,325.0 865.0,323.0 C 840.0,324.5 820.0,330.0 807.5,339.5 Z" fill="#1b1b1c" />
<path d="M 820.0,362.5 C 840.0,360.0 875.0,360.5 905.0,374.0" fill="none" stroke="#111" stroke-width="1.500"/>
<path d="M 775.0,370.0 L 820.0,362.0 L 813.0,390.5 Z" fill="#1b1b1c" />
<path d="M812.5,438.0 C817.2,435.3 821.2,430.2 830.0,428.0 C838.8,425.8 853.8,424.4 865.0,425.0 C876.2,425.6 889.4,428.9 897.5,431.5 C905.6,434.1 909.4,438.1 913.8,440.5 C912.8,444.4 914.0,450.3 910.0,455.0 C906.0,459.7 897.5,465.4 890.0,468.8 C882.5,472.1 873.3,474.4 865.0,475.0 C856.7,475.6 847.1,474.6 840.0,472.5 C832.9,470.4 826.8,466.5 822.5,462.5 C818.2,458.5 815.9,452.8 814.2,448.8 C812.6,444.7 813.0,440.9 812.5,438.0 Z" fill="#1b1b1c" />
<path d="M 935.0,368.8 L 950.0,375.0 L 955.5,390.0 L 950.0,407.5 L 940.0,425.0 L 927.5,438.0 L 913.8,440.5 L 915.0,390.0 Z" fill="#e4e4e4" />
<path d="M 908.0,388.0 C 910.0,375.0 922.5,365.0 936.2,370.0 C 940.0,377.5 938.8,390.0 935.0,395.5 Z" fill="#9c9c9c" />
<path d="M975.0,476.2 C984.3,474.6 1000.7,471.7 1010.0,470.0 C1014.0,473.3 1018.8,476.5 1025.0,482.5 C1031.2,488.5 1041.5,499.9 1047.5,506.2 C1040.2,506.6 1027.3,507.2 1020.0,507.5 C1018.3,510.0 1017.5,516.4 1013.8,517.0 C1010.0,517.6 1002.7,514.9 997.5,511.2 C992.3,507.6 986.2,500.8 982.5,495.0 C978.8,489.2 977.0,481.2 975.0,476.2 Z" fill="#1b1b1c" />
<path d="M 1010.0,473.8 L 1025.0,482.5 L 1037.5,496.2 L 1048.0,506.2 L 1043.8,503.0 L 1020.5,507.5 Z" fill="#c9c9c9" />
<path d="M 940.0,368.8 C 965.0,367.5 1002.5,376.2 1022.5,392.5 C 1045.0,402.5 1080.0,420.0 1095.0,432.5 C 1110.0,450.0 1110.0,480.0 1090.0,495.0 C 1075.0,505.0 1055.0,506.2 1045.0,502.5 L 1010.0,472.5 L 1000.0,470.5 C 977.5,475.0 952.5,462.5 927.5,440.0 C 940.0,425.0 952.5,407.5 955.0,390.0 C 955.0,380.0 947.5,372.5 940.0,368.8 Z" fill="#1b1b1c" />
<path d="M 955.5,389.0 L 1026.2,412.0 L 1025.8,416.0 L 954.5,392.5 Z" fill="#dedede" />
<path d="M 1023.0,393.0 C 1033.0,415.0 1028.0,445.0 1001.2,470.5" fill="none" stroke="#cfcfcf" stroke-width="2.600"/>
<ellipse cx="1089.5" cy="455.0" rx="11.5" ry="22.0" fill="#dcdcdc" transform="rotate(-8 1089.5 455.0)" />
<path d="M1013.8,516.2 C1016.1,514.9 1020.2,512.6 1022.5,511.2 C1029.8,511.7 1042.5,511.5 1050.0,513.0 C1057.5,514.5 1062.8,518.1 1067.5,520.0 C1068.2,522.0 1069.8,522.5 1070.0,527.5 C1070.2,532.5 1068.7,542.9 1068.5,550.0 C1068.3,557.1 1069.5,563.3 1069.0,570.0 C1068.5,576.7 1066.8,584.0 1065.5,590.0 C1064.2,596.0 1062.4,601.9 1061.2,606.2 C1038.2,599.9 998.0,588.8 975.0,582.5 C975.3,580.5 974.6,578.8 976.2,575.0 C977.9,571.2 981.0,566.2 985.0,560.0 C989.0,553.8 995.2,544.8 1000.0,537.5 C1004.8,530.2 1010.1,521.9 1013.8,516.2 Z" fill="#1b1b1c" />
<path d="M 1020.0,512.0 L 1050.0,513.0 L 1068.0,523.8 L 1066.5,527.0 L 1049.5,516.2 L 1021.0,515.0 Z" fill="#e0e0e0" />
<path d="M 1013.8,518.0 L 996.2,550.0 L 993.0,565.5" fill="none" stroke="#cfcfcf" stroke-width="2.200"/>
<path d="M975.0,582.5 C974.3,585.8 970.8,591.2 972.5,595.0 C974.2,598.8 981.7,602.7 985.0,605.5 C990.3,609.4 1000.8,611.3 1005.0,620.0 C1009.2,628.7 1008.7,647.5 1010.0,657.5 C1013.3,657.8 1019.2,658.4 1022.5,658.8 C1027.2,655.1 1035.2,649.8 1040.0,645.0 C1044.8,640.2 1048.3,636.2 1051.2,630.0 C1054.2,623.8 1055.8,613.5 1057.5,607.5 C1035.5,600.8 997.0,589.2 975.0,582.5 Z" fill="#1b1b1c" />
<path d="M975.0,601.2 C975.7,594.2 975.0,581.9 977.5,575.0 C980.0,568.1 986.7,564.0 990.0,560.0 C1010.0,560.0 1045.0,560.0 1065.0,560.0 C1065.8,566.7 1068.8,577.9 1068.0,585.0 C1067.2,592.1 1062.6,596.2 1060.0,602.5 C1057.4,608.8 1055.4,616.2 1052.5,622.5 C1049.6,628.8 1047.1,634.4 1042.5,640.0 C1037.9,645.6 1030.2,652.1 1025.0,656.2 C1019.8,660.4 1014.9,662.7 1011.2,665.0 C1010.2,669.0 1009.4,675.0 1007.5,680.0 C1005.6,685.0 1002.9,690.0 1000.0,695.0 C997.1,700.0 993.8,705.6 990.0,710.0 C986.2,714.4 982.3,718.7 977.5,721.2 C972.7,723.8 965.6,724.4 961.2,725.5 C962.2,718.7 966.5,708.0 965.0,700.0 C963.5,692.0 955.8,683.5 952.5,677.5 C949.2,675.5 945.4,671.7 940.0,670.0 C934.6,668.3 928.3,665.0 920.0,667.5 C911.7,670.0 898.0,680.3 890.0,685.0 C886.8,681.8 881.2,676.2 878.0,673.0 C879.3,671.5 881.8,670.9 883.0,667.5 C884.2,664.1 883.1,657.9 885.5,652.5 C887.9,647.1 892.6,640.4 897.5,635.0 C902.4,629.6 907.9,624.7 915.0,620.0 C922.1,615.3 930.0,610.1 940.0,607.0 C950.0,603.9 965.7,602.8 975.0,601.2 Z" fill="#1b1b1c" />
<path d="M976.2,576.2 C980.6,573.4 986.5,567.4 992.5,565.5 C998.5,563.6 1005.0,563.4 1012.5,565.0 C1020.0,566.6 1030.3,571.2 1037.5,575.0 C1044.7,578.8 1051.5,582.4 1055.5,587.5 C1059.5,592.6 1060.1,600.7 1061.8,605.5 C1060.6,606.2 1058.6,607.3 1057.5,608.0 C1055.5,604.5 1053.8,599.0 1050.0,595.0 C1046.2,591.0 1041.7,587.5 1035.0,583.8 C1028.3,580.0 1017.5,574.2 1010.0,572.5 C1002.5,570.8 995.8,572.0 990.0,573.8 C984.2,575.5 979.0,580.5 975.0,583.0 C975.3,581.2 975.9,578.0 976.2,576.2 Z" fill="#e2e2e2" />
<path d="M 965.0,607.5 L 980.0,606.2 L 984.0,613.8 L 970.0,622.5 L 958.8,635.0 L 955.0,650.0 L 960.0,667.5 L 972.5,685.0 L 975.5,695.0 L 967.5,700.0 L 955.0,677.5 L 945.0,660.0 L 942.5,640.0 L 950.0,622.5 Z" fill="#e4e4e4" />
<ellipse cx="1002.5" cy="645.0" rx="9.5" ry="14.5" fill="#dadada" transform="rotate(-15 1002.5 645.0)" />
<path d="M919.5,669.5 C923.5,668.5 928.5,666.5 933.0,666.8 C937.5,667.0 942.0,668.5 946.2,671.0 C950.5,673.5 955.5,678.2 958.2,681.5 C961.0,684.8 962.0,686.3 962.5,690.5 C963.0,694.7 961.8,701.3 961.2,706.8 C960.7,712.2 960.2,717.3 959.0,723.0 C957.8,728.7 956.4,735.1 953.8,740.8 C951.1,746.4 947.2,752.0 943.2,757.0 C939.3,762.0 934.9,766.5 930.0,770.5 C925.1,774.5 918.5,778.8 913.8,780.8 C909.0,782.7 905.0,781.9 901.8,782.2 C899.0,779.9 895.2,777.2 891.5,773.2 C887.8,769.3 883.2,763.4 879.5,758.5 C875.8,753.6 872.0,747.7 869.2,743.8 C868.2,741.4 865.2,738.7 865.5,734.8 C865.8,730.8 868.4,725.4 870.8,720.0 C873.1,714.6 876.5,707.4 879.5,702.2 C882.5,697.1 885.2,693.0 888.5,689.0 C891.8,685.0 895.5,681.2 899.0,678.5 C902.5,675.8 905.8,674.0 909.2,672.5 C912.7,671.0 915.5,670.5 919.5,669.5 Z" fill="url(#ghand)" />
<path d="M 865.0,735.0 L 880.0,745.5 L 897.5,780.0 L 880.0,770.0 L 865.0,742.5 Z" fill="#cdcdcd" />
<ellipse cx="897.5" cy="689.0" rx="10.5" ry="6.8" fill="#202020" transform="rotate(32 897.5 689.0)" />
<path d="M 876.2,742.0 L 882.0,746.2 L 865.5,768.8 L 860.0,765.5 Z" fill="#111" />
<path d="M 892.5,764.5 L 898.0,770.0 L 880.0,789.2 L 874.0,786.2 Z" fill="#111" />
<text font-family="Liberation Sans,sans-serif" font-weight="bold" font-size="10.500" fill="#e81010" stroke="#e81010" stroke-width=".4" transform="translate(926.5 714.5) rotate(52)">ABB</text>
<path d="M602.5,710.0 C605.2,710.8 609.2,712.2 612.5,713.0 C615.8,713.8 617.9,715.3 622.5,715.0 C627.1,714.7 635.4,711.7 640.0,711.2 C644.6,710.8 645.8,710.6 650.0,712.5 C654.2,714.4 660.0,719.2 665.0,722.5 C670.0,725.8 675.0,729.2 680.0,732.5 C685.0,735.8 690.4,738.8 695.0,742.5 C699.6,746.2 704.5,750.8 707.5,755.0 C710.5,759.2 712.5,763.3 713.0,767.5 C713.5,771.7 712.6,774.6 710.5,780.0 C708.4,785.4 703.8,794.1 700.5,800.0 C697.2,805.9 693.9,812.5 690.5,815.5 C687.1,818.5 682.8,817.3 680.0,818.0 C669.3,815.3 649.6,810.9 640.0,808.0 C630.4,805.1 627.5,803.0 622.5,800.5 C617.5,798.0 613.3,795.5 610.0,793.0 C606.7,790.5 605.0,788.0 602.5,785.5 C600.0,783.0 597.9,780.2 595.0,778.0 C592.1,775.8 587.7,774.0 585.0,772.5 C584.0,769.2 580.4,766.2 581.2,760.0 C582.1,753.8 586.5,743.3 590.0,735.0 C593.5,726.7 599.2,716.7 602.5,710.0 Z" fill="url(#ghand)" />
<ellipse cx="633.8" cy="806.5" rx="4.5" ry="3.5" fill="#ececec" stroke="#aaa" stroke-width=".4"/>
<path d="M 673.8,693.8 L 688.8,698.8 L 688.0,701.2 L 673.0,696.5 Z" fill="#111" />
<path d="M 679.5,698.2 L 683.0,699.5 L 677.5,712.5 L 673.8,711.2 Z" fill="#222" />
<ellipse cx="671.2" cy="720.5" rx="8.5" ry="9.0" fill="#2c2c2c" />
<path d="M 712.0,767.5 L 735.5,785.5 L 733.0,788.5 L 711.0,775.5 Z" fill="#151515" />
<path d="M 702.5,799.5 L 725.5,815.5 L 722.5,818.5 L 698.0,807.0 Z" fill="#151515" />
<text font-family="Liberation Sans,sans-serif" font-weight="bold" font-size="10.500" fill="#e81010" stroke="#e81010" stroke-width=".4" transform="translate(650.0 778.5) rotate(-68)">ABB</text>
<path d="M 1321.0,217.0 L 1362.0,215.0 L 1381.0,222.0 L 1334.5,223.5 Z" fill="#b5c0cd" opacity=".95"/>
<path d="M 1321.0,217.0 L 1334.5,223.5 L 1335.2,273.7 L 1322.0,264.5 Z" fill="#a4b0c0" />
<path d="M 1334.5,223.5 L 1381.0,222.3 L 1380.0,269.0 L 1335.2,273.7 Z" fill="#a9b5c5" />
<path d="M 1321.0,217.0 L 1334.5,223.5 L 1381.0,222.3 M 1334.5,223.5 L 1335.2,273.7" fill="none" stroke="#8c98aa" stroke-width=".8"/>
<path d="M 1326.0,243.0 l 5.0,3.0 l -5.0,4.0 z" fill="none" stroke="#6d7a90" stroke-width=".8"/>
<text x="1342" y="255" font-family="Liberation Sans,sans-serif" font-weight="bold" font-size="15" fill="#5f6c82" textLength="33" lengthAdjust="spacingAndGlyphs" transform="skewY(-3)" style="transform-origin:1342px 255px">FRONT</text>
<path d="M 1322.0,266.0 L 1335.0,275.0 L 1380.0,270.0 L 1372.0,276.0 L 1336.0,280.0 Z" fill="#5e6b7c" opacity=".35"/>
<text x="68" y="909.500" font-family="Liberation Sans,sans-serif" font-weight="bold" font-size="14" fill="#00ff00">y</text>
<text x="83.500" y="922" font-family="Liberation Sans,sans-serif" font-weight="bold" font-size="13" fill="#ff1010">x</text>
<text x="74.500" y="927.500" font-family="Liberation Sans,sans-serif" font-weight="bold" font-size="13" fill="#1010ff">z</text>
<path d="M 72.5,912.5 L 72.5,927.0" fill="none" stroke="#00ff00" stroke-width="1.300"/>
<path d="M 81.5,926.6 L 85.5,926.6 M 72.0,927.5 L 75.0,927.5" fill="none" stroke="#ff1010" stroke-width="1"/>
<path d="M 73.0,928.0 L 78.0,931.0" fill="none" stroke="#1010c0" stroke-width="1"/>
<text x="702" y="942.500" font-family="Liberation Serif,serif" font-size="11" fill="#0f5a2c" textLength="33">persp</text>
</svg>

</div>
<div class="a" style="left:1409px;top:153px;width:161px;height:7px;background:repeating-linear-gradient(135deg,#4e4e4e 0 1px,#3c3c3c 1px 2px,#444 2px 4px)"></div>
<div class="a" style="left:1650px;top:153px;width:155px;height:7px;background:repeating-linear-gradient(135deg,#4e4e4e 0 1px,#3c3c3c 1px 2px,#444 2px 4px)"></div>
<div class="t" style="left:1577px;top:151px;font-size:10px;color:#e0e0e0">Attribute Editor</div>
<svg style="left:1808px;top:151px" width="28" height="12"><rect x="0.500" y="0.500" width="11" height="11" rx="1" fill="#3a3a3a" stroke="#2a2a2a"/><path d="M3 5.500h4v4h-4zM5 5V3h4v4H7.500" stroke="#ddd" fill="none"/><rect x="14.500" y="0.500" width="12" height="11" rx="1" fill="#3a3a3a" stroke="#2a2a2a"/><path d="M17.500 3l6 6M23.500 3l-6 6" stroke="#e8e8e8" stroke-width="1.300"/></svg>
<div class="t" style="left:1418px;top:174px">List</div>
<div class="t" style="left:1449px;top:174px">Selected</div>
<div class="t" style="left:1505px;top:174px">Focus</div>
<div class="t" style="left:1548px;top:174px">Attributes</div>
<div class="t" style="left:1611px;top:174px">Show</div>
<div class="t" style="left:1652px;top:174px">Help</div>
<div class="t" style="left:1415px;top:196px">Make a selection to view attributes</div>
<div class="t" style="left:1420px;top:817px;font-weight:bold;color:#8a8a8a">Notes:</div>
<div class="a" style="left:1412px;top:830px;width:424px;height:92px;background:#2b2b2b;border:1px solid #383838;border-radius:2px"></div>
<div class="btn" style="left:1412px;top:927px;width:138px;height:24px;background:linear-gradient(#545454,#4e4e4e)">Select</div>
<div class="btn" style="left:1553px;top:927px;width:140px;height:24px;color:#e4e4e4;background:linear-gradient(#666,#595959)">Load Attributes</div>
<div class="btn" style="left:1696px;top:927px;width:139px;height:24px;background:linear-gradient(#545454,#4e4e4e)">Copy Tab</div>
<div class="a" style="left:1837px;top:149px;width:21px;height:145px;border:1px solid #333;border-left:none;border-radius:0 4px 4px 0;background:#444"></div>
<div class="a" style="left:1836px;top:300px;width:22px;height:97px;border:1px solid #6a6a6a;border-left:none;border-radius:0 4px 4px 0;background:linear-gradient(90deg,#6a6a6a,#5e5e5e)"></div>
<div class="t" style="left:1853px;top:159px;transform-origin:0 0;transform:rotate(90deg);color:#e0e0e0;font-size:11px;letter-spacing:-0.15px">Channel Box / Layer Editor</div>
<div class="t" style="left:1853px;top:311px;transform-origin:0 0;transform:rotate(90deg);color:#d0d0d0;font-size:11px">Attribute Editor</div>
<div class="a" style="left:14px;top:959px;width:1543px;height:30px;background:#767676;border-bottom:1px solid #5a5a5a"></div>
<div class="a" style="left:21px;top:959px;width:64px;height:29px;background:#5e5e5e"></div>
<div class="a" style="left:21.2px;top:972px;width:2px;height:15px;background:#0c0c0c"></div>
<div class="t" style="left:33.7px;top:957px;color:#1a1a1a;font-size:11px">1</div>
<div class="a" style="left:84.9px;top:972px;width:2px;height:15px;background:#0c0c0c"></div>
<div class="t" style="left:97.4px;top:957px;color:#1a1a1a;font-size:11px">2</div>
<div class="a" style="left:148.5px;top:972px;width:2px;height:15px;background:#0c0c0c"></div>
<div class="t" style="left:161.0px;top:957px;color:#1a1a1a;font-size:11px">3</div>
<div class="a" style="left:212.2px;top:972px;width:2px;height:15px;background:#0c0c0c"></div>
<div class="t" style="left:224.7px;top:957px;color:#1a1a1a;font-size:11px">4</div>
<div class="a" style="left:275.8px;top:972px;width:2px;height:15px;background:#0c0c0c"></div>
<div class="t" style="left:288.3px;top:957px;color:#1a1a1a;font-size:11px">5</div>
<div class="a" style="left:339.5px;top:972px;width:2px;height:15px;background:#0c0c0c"></div>
<div class="t" style="left:352.0px;top:957px;color:#1a1a1a;font-size:11px">6</div>
<div class="a" style="left:403.2px;top:972px;width:2px;height:15px;background:#0c0c0c"></div>
<div class="t" style="left:415.7px;top:957px;color:#1a1a1a;font-size:11px">7</div>
<div class="a" style="left:466.8px;top:972px;width:2px;height:15px;background:#0c0c0c"></div>
<div class="t" style="left:479.3px;top:957px;color:#1a1a1a;font-size:11px">8</div>
<div class="a" style="left:530.5px;top:972px;width:2px;height:15px;background:#0c0c0c"></div>
<div class="t" style="left:543.0px;top:957px;color:#1a1a1a;font-size:11px">9</div>
<div class="a" style="left:594.1px;top:972px;width:2px;height:15px;background:#0c0c0c"></div>
<div class="t" style="left:606.6px;top:957px;color:#1a1a1a;font-size:11px">10</div>
<div class="a" style="left:657.8px;top:972px;width:2px;height:15px;background:#0c0c0c"></div>
<div class="t" style="left:670.3px;top:957px;color:#1a1a1a;font-size:11px">11</div>
<div class="a" style="left:721.5px;top:972px;width:2px;height:15px;background:#0c0c0c"></div>
<div class="t" style="left:734.0px;top:957px;color:#1a1a1a;font-size:11px">12</div>
<div class="a" style="left:785.1px;top:972px;width:2px;height:15px;background:#0c0c0c"></div>
<div class="t" style="left:797.6px;top:957px;color:#1a1a1a;font-size:11px">13</div>
<div class="a" style="left:848.8px;top:972px;width:2px;height:15px;background:#0c0c0c"></div>
<div class="t" style="left:861.3px;top:957px;color:#1a1a1a;font-size:11px">14</div>
<div class="a" style="left:912.4px;top:972px;width:2px;height:15px;background:#0c0c0c"></div>
<div class="t" style="left:924.9px;top:957px;color:#1a1a1a;font-size:11px">15</div>
<div class="a" style="left:976.1px;top:972px;width:2px;height:15px;background:#0c0c0c"></div>
<div class="t" style="left:988.6px;top:957px;color:#1a1a1a;font-size:11px">16</div>
<div class="a" style="left:1039.8px;top:972px;width:2px;height:15px;background:#0c0c0c"></div>
<div class="t" style="left:1052.3px;top:957px;color:#1a1a1a;font-size:11px">17</div>
<div class="a" style="left:1103.4px;top:972px;width:2px;height:15px;background:#0c0c0c"></div>
<div class="t" style="left:1115.9px;top:957px;color:#1a1a1a;font-size:11px">18</div>
<div class="a" style="left:1167.1px;top:972px;width:2px;height:15px;background:#0c0c0c"></div>
<div class="t" style="left:1179.6px;top:957px;color:#1a1a1a;font-size:11px">19</div>
<div class="a" style="left:1230.7px;top:972px;width:2px;height:15px;background:#0c0c0c"></div>
<div class="t" style="left:1243.2px;top:957px;color:#1a1a1a;font-size:11px">20</div>
<div class="a" style="left:1294.4px;top:972px;width:2px;height:15px;background:#0c0c0c"></div>
<div class="t" style="left:1306.9px;top:957px;color:#1a1a1a;font-size:11px">21</div>
<div class="a" style="left:1358.1px;top:972px;width:2px;height:15px;background:#0c0c0c"></div>
<div class="t" style="left:1370.6px;top:957px;color:#1a1a1a;font-size:11px">22</div>
<div class="a" style="left:1421.7px;top:972px;width:2px;height:15px;background:#0c0c0c"></div>
<div class="t" style="left:1434.2px;top:957px;color:#1a1a1a;font-size:11px">23</div>
<div class="a" style="left:1485.4px;top:972px;width:2px;height:15px;background:#0c0c0c"></div>
<div class="t" style="left:1497.9px;top:957px;color:#1a1a1a;font-size:11px">24</div>
<div class="t" style="left:34px;top:972px;color:#fff;font-size:11px">1</div>
<div class="fld" style="left:1560px;top:964px;width:69px;height:19px">1.00</div>
<svg style="left:1632px;top:962px" width="222" height="26"><rect x="5" y="6.5" width="2" height="13" fill="#d8d8d8"/><path d="M15.5 8.5v9l-7 -4.5z" fill="#d8d8d8"/><path d="M21.5 8.5v9l-7 -4.5z" fill="#d8d8d8"/><rect x="34" y="6.5" width="2" height="13" fill="#d8d8d8"/><path d="M47.0 7.0v12l-10 -6.0z" fill="#d8d8d8"/><rect x="62" y="6.5" width="2" height="13" fill="#d8d8d8"/><rect x="60" y="1" width="1" height="24" fill="#c22"/><path d="M75.0 7.0v12l-10 -6.0z" fill="#d8d8d8"/><path d="M102.5 7.0v12l-11 -6.0z" fill="#d8d8d8"/><path d="M118.5 7.0v12l11 -6.0z" fill="#d8d8d8"/><path d="M145.0 7.0v12l10 -6.0z" fill="#d8d8d8"/><rect x="156" y="6.5" width="2" height="13" fill="#d8d8d8"/><rect x="159" y="1" width="1" height="24" fill="#c22"/><path d="M173.0 7.0v12l10 -6.0z" fill="#d8d8d8"/><rect x="185" y="6.5" width="2" height="13" fill="#d8d8d8"/><path d="M198.5 8.5v9l7 -4.5z" fill="#d8d8d8"/><path d="M204.5 8.5v9l7 -4.5z" fill="#d8d8d8"/><rect x="213" y="6.5" width="2" height="13" fill="#d8d8d8"/></svg>
<div class="fld" style="left:14px;top:997px;width:68px;height:19px">1.00</div>
<div class="fld" style="left:86px;top:997px;width:68px;height:19px">1.00</div>
<div class="a" style="left:157px;top:996px;width:1265px;height:21px;background:#2d2d2d;border-radius:2px"></div>
<div class="a" style="left:165px;top:998px;width:626px;height:18px;background:#6c6c6c;border:1px solid #7c7c7c;border-radius:2px"></div>
<svg style="left:168px;top:1001px" width="12" height="12"><path d="M2 10.500h8v-8" stroke="#d0d0d0" fill="none"/></svg>
<svg style="left:776px;top:1001px" width="12" height="12"><path d="M2 10.500h8v-8" stroke="#d0d0d0" fill="none"/></svg>
<div class="t" style="left:184px;top:1000px;color:#e8e8e8">1</div>
<div class="t" style="left:759px;top:1000px;color:#e8e8e8">24</div>
<div class="fld" style="left:1424px;top:997px;width:69px;height:19px">24.00</div>
<div class="fld" style="left:1496px;top:997px;width:69px;height:19px">48.00</div>
<svg style="left:1570px;top:1001px" width="12" height="8"><path d="M1.500 1.500h8l-4 4.500z" stroke="#888" fill="none"/></svg>
<div class="a" style="left:1587px;top:997px;width:102px;height:19px;border:1px solid #505050;border-radius:2px;background:#4a4a4a"><div class="t" style="left:3px;top:2px">No Anim Layer</div></div>
<svg style="left:1693px;top:1001px" width="12" height="8"><path d="M1.500 1.500h8l-4 4.500z" stroke="#888" fill="none"/></svg>
<div class="a" style="left:1710px;top:997px;width:102px;height:19px;border:1px solid #505050;border-radius:2px;background:#4a4a4a"><div class="t" style="left:3px;top:2px">No Character Set</div></div>
<svg style="left:1816px;top:1000px" width="40" height="14"><circle cx="3.500" cy="7" r="2.500" stroke="#ccc" fill="none"/><path d="M6 7h10M13.500 7v3M10.500 7v2" stroke="#ccc"/><rect x="22" y="0.500" width="14" height="13" fill="#d8d8d8" stroke="#888"/><rect x="22" y="0.500" width="14" height="3" fill="#5a7fb5"/><path d="M25 11c2-6 5-1 8-6" stroke="#c22" stroke-width="1.500" fill="none"/></svg>
<div class="t" style="left:24px;top:1031px;font-size:10px;color:#e0e0e0">MEL</div>
<div class="a" style="left:59px;top:1026px;width:886px;height:22px;background:#2b2b2b;border:1px solid #393939;border-radius:2px"></div>
<div class="a" style="left:950px;top:1025px;width:888px;height:24px;background:#000;border:1px solid #333;border-radius:2px"></div>
<svg style="left:1840px;top:1030px" width="13" height="13"><rect x="0.500" y="0.500" width="12" height="12" fill="#d8d8d8" stroke="#777"/><rect x="1" y="1" width="11" height="3" fill="#456fa8"/><path d="M2 7h9M2 10h9" stroke="#444"/></svg>
<div class="a" style="left:13px;top:1055px;width:1840px;height:22px;border:1px solid #363636;border-radius:2px;box-shadow:inset 0 0 0 1px #4d4d4d"></div>
<div class="t" style="left:26px;top:1060px;font-size:10px;color:#e4e4e4">Select Tool: select an object</div>
<svg style="left:57px;top:168px" width="20" height="20" viewBox="0 0 20 20"><circle cx="6.5" cy="6.5" r="3.2" fill="url(#cam)" stroke="#222" stroke-width=".5"/><circle cx="6.5" cy="6.5" r="1.2800000000000002" fill="#444"/><circle cx="12.5" cy="6" r="3" fill="url(#cam)" stroke="#222" stroke-width=".5"/><circle cx="12.5" cy="6" r="1.2000000000000002" fill="#444"/><path d="M6 11l8-1.500 3 1-1 3.500-8 2z" fill="#111"/><path d="M14 12l4-1v3.500l-4 .5z" fill="#222"/></svg>
<svg style="left:76.5px;top:168px" width="20" height="20" viewBox="0 0 20 20"><circle cx="5" cy="5.5" r="2.6" fill="url(#cam)" stroke="#222" stroke-width=".5"/><circle cx="5" cy="5.5" r="1.04" fill="#444"/><circle cx="10" cy="5" r="2.4" fill="url(#cam)" stroke="#222" stroke-width=".5"/><circle cx="10" cy="5" r="0.96" fill="#444"/><path d="M4.500 9.500l6-1 1 3-6 1.500z" fill="#111"/><rect x="9.500" y="8.500" width="7.500" height="9" fill="#e8e8e8" stroke="#555" stroke-width=".5"/><path d="M11 10.500h4.500M11 12.500h4.500M11 14.500h4.500" stroke="#444" stroke-width=".8"/></svg>
<svg style="left:96.8px;top:168px" width="20" height="20" viewBox="0 0 20 20"><rect x="3.500" y="3.500" width="13" height="13.500" fill="#e8e8e8" stroke="#888" stroke-width=".6"/><path d="M7.500 4v12.500" stroke="#888"/><path d="M10.500 2.500h4.500v13l-2.200-2-2.300 2z" fill="#20b040" stroke="#0c6a1c" stroke-width=".5"/></svg>
<svg style="left:117px;top:168px" width="20" height="20" viewBox="0 0 20 20"><path d="M4 13l8-9.500 4.500 2-7.500 10z" fill="#3a68c0" stroke="#ddd" stroke-width=".8"/><path d="M7 12.500l5-5 2.500 2.500-4 4z" fill="#48c038"/><path d="M3 14.500l6 3 8.500-6.500" fill="none" stroke="#ddd" stroke-width="1.200"/></svg>
<svg style="left:136.7px;top:168px" width="20" height="20" viewBox="0 0 20 20"><path d="M6 2v11M1.500 6.500h9" stroke="#d82a2e" stroke-width="1.300"/><path d="M6 2l-1.500 2h3zM1.500 6.500l2-1.500v3zM10.500 6.500l-2-1.500v3z" fill="#d82a2e"/><circle cx="13" cy="7.500" r="3.600" fill="#fff" stroke="#d82a2e" stroke-width="1.100"/><path d="M13 5.500v4M11 7.500h4" stroke="#d82a2e" stroke-width="1.100"/><path d="M10.500 10.500l-5.500 6.500" stroke="#8a5a2a" stroke-width="1.800"/></svg>
<svg style="left:167.4px;top:168px" width="20" height="20" viewBox="0 0 20 20"><rect x="2" y="2.500" width="16" height="15" fill="#8596aa"/><path d="M3 10.500l7-4 7 4-7 4z" fill="none" stroke="#e0e6ee" stroke-width="1"/><path d="M6.500 8.500l7 4M13.500 8.500l-7 4" stroke="#e0e6ee" stroke-width=".8"/></svg>
<svg style="left:187.7px;top:168px" width="20" height="20" viewBox="0 0 20 20"><rect x="2.500" y="3.500" width="15" height="13" fill="#111" stroke="#ddd" stroke-width=".6"/><rect x="4" y="6.500" width="3.500" height="7" fill="#6aaae0"/><rect x="8.300" y="6.500" width="3.500" height="7" fill="#6aaae0"/><rect x="12.600" y="6.500" width="3.500" height="7" fill="#6aaae0"/><path d="M3.500 5h13M3.500 15h13" stroke="#eee" stroke-width="1" stroke-dasharray="1.500 1.200"/></svg>
<svg style="left:208px;top:168px" width="20" height="20" viewBox="0 0 20 20"><rect x="2.500" y="3.500" width="15" height="13" fill="#f0f0f0" stroke="#999" stroke-width=".6"/><circle cx="10" cy="10" r="4.800" fill="url(#bsph)"/></svg>
<svg style="left:228.3px;top:168px" width="20" height="20" viewBox="0 0 20 20"><rect x="2.500" y="3" width="15" height="14" fill="#a0a0a0" stroke="#c8c8c8" stroke-width=".8"/><circle cx="10" cy="10" r="4.500" fill="#c4c4c4" stroke="#d8d8d8" stroke-width=".8"/></svg>
<svg style="left:248px;top:168px" width="20" height="20" viewBox="0 0 20 20"><rect x="2.500" y="3.500" width="15" height="13" fill="#d0d0d0" stroke="#eee" stroke-width=".6"/><path d="M3 4l14 12M17 4l-14 12M10 4v12M3 10h14M6 6.500h8v7h-8z" stroke="#333" stroke-width=".8" fill="none"/></svg>
<svg style="left:268.2px;top:168px" width="20" height="20" viewBox="0 0 20 20"><rect x="3" y="3.500" width="14.500" height="13" fill="#e8f0e8" stroke="#20b040" stroke-width="1.400"/><circle cx="7.500" cy="8" r="2.300" fill="url(#bsph)"/><circle cx="13" cy="8.500" r="1.900" fill="url(#bsph)"/><circle cx="9.500" cy="13" r="2.300" fill="url(#bsph)"/></svg>
<svg style="left:288.5px;top:168px" width="20" height="20" viewBox="0 0 20 20"><rect x="3" y="3.500" width="14.500" height="13" fill="#f0f0f0" stroke="#20b040" stroke-width="1.400"/><text x="10.200" y="15" text-anchor="middle" font-family="Liberation Serif,serif" font-weight="bold" font-size="13" fill="#111">T</text></svg>
<svg style="left:319px;top:168px" width="20" height="20" viewBox="0 0 20 20"><path d="M4 6.500l6-2.500 6.500 1.500v9l-6 3-6.500-2z" fill="none" stroke="#e8e8e8" stroke-width="1"/><path d="M4 6.500l6.500 2 6-3M10.500 8.500v9" stroke="#e8e8e8" stroke-width="1" fill="none"/><path d="M10 4v8.500l-6 3M10 12.500l6.500 2" stroke="#bbb" stroke-width=".6" fill="none"/></svg>
<svg style="left:340px;top:168px" width="20" height="20" viewBox="0 0 20 20"><path d="M3.500 6l6-2.500 7 1.500v9.500l-6 3-7-2z" fill="#5b9ad8"/><path d="M3.500 6l7 2 6-3-7-1.500z" fill="#9cc8f0"/><path d="M10.500 8l6-3v9.500l-6 3z" fill="#3d7fc0"/></svg>
<svg style="left:359.6px;top:168px" width="20" height="20" viewBox="0 0 20 20"><path d="M3.500 6l6-2.500 7 1.500v9.500l-6 3-7-2z" fill="#5b9ad8"/><path d="M3.500 6l7 2 6-3-7-1.500z" fill="#9cc8f0"/><path d="M4 6.500l6-2.500 6.500 1.500v9l-6 3-6.500-2z" fill="none" stroke="#f0f0f0" stroke-width="1"/><path d="M4 6.500l6.500 2 6-3M10.500 8.500v9" stroke="#f0f0f0" stroke-width="1" fill="none"/></svg>
<svg style="left:379.9px;top:168px" width="20" height="20" viewBox="0 0 20 20"><circle cx="10" cy="10" r="7.500" fill="#111"/><circle cx="10" cy="10" r="7.500" fill="none" stroke="#556" stroke-width=".5"/><rect x="4.6" y="4.6" width="3.600" height="3.600" fill="#e0e8f0" transform="rotate(20 10 10)"/><rect x="11.8" y="4.6" width="3.600" height="3.600" fill="#e0e8f0" transform="rotate(20 10 10)"/><rect x="8.2" y="8.2" width="3.600" height="3.600" fill="#e0e8f0" transform="rotate(20 10 10)"/><rect x="4.6" y="11.8" width="3.600" height="3.600" fill="#e0e8f0" transform="rotate(20 10 10)"/><rect x="11.8" y="11.8" width="3.600" height="3.600" fill="#e0e8f0" transform="rotate(20 10 10)"/><rect x="1" y="8.2" width="3.600" height="3.600" fill="#e0e8f0" transform="rotate(20 10 10)"/><rect x="15.4" y="8.2" width="3.600" height="3.600" fill="#e0e8f0" transform="rotate(20 10 10)"/><rect x="8.2" y="1" width="3.600" height="3.600" fill="#e0e8f0" transform="rotate(20 10 10)"/><rect x="8.2" y="15.4" width="3.600" height="3.600" fill="#e0e8f0" transform="rotate(20 10 10)"/></svg>
<svg style="left:398.8px;top:168px" width="20" height="20" viewBox="0 0 20 20"><circle cx="10" cy="10" r="6" fill="url(#ysph)"/></svg>
<svg style="left:418.3px;top:168px" width="20" height="20" viewBox="0 0 20 20"><circle cx="10" cy="10" r="6.500" fill="url(#gsph)"/></svg>
<svg style="left:438px;top:168px" width="20" height="20" viewBox="0 0 20 20"><circle cx="10" cy="10" r="7" fill="url(#osph)"/></svg>
<svg style="left:470px;top:168px" width="20" height="20" viewBox="0 0 20 20"><rect x="2.500" y="2.500" width="11" height="11" fill="none" stroke="#28d028" stroke-width="1.400" stroke-dasharray="2.200 1.400"/><path d="M8.5 7.5l0 9.500 2.300-2 1.800 3.800 1.800-.8-1.800-3.700 3-.2z" fill="#b4161c" stroke="#f0d0d0" stroke-width=".6"/></svg>
<div class="a" style="left:501.5px;top:169px;width:19px;height:19px;background:#2a2a2a;border-radius:2px"></div>
<div class="a" style="left:521.0px;top:169px;width:19px;height:19px;background:#2a2a2a;border-radius:2px"></div>
<div class="a" style="left:541.5px;top:169px;width:19px;height:19px;background:#2a2a2a;border-radius:2px"></div>
<svg style="left:501px;top:168px" width="20" height="20" viewBox="0 0 20 20"><path d="M4 6.500l6-2.500 6.500 1.500v9l-6 3-6.500-2z" fill="#444" stroke="#d8d8d8" stroke-width="1"/><path d="M4 6.500l6.500 2 6-3M10.500 8.500v9" stroke="#d8d8d8" stroke-width="1" fill="none"/><path d="M6 8l3.500 1M6 10.500l3.500 1M6 13l3.500 1M12 9.500l3-1.500M12 12l3-1.500M12 14.500l3-1.500" stroke="#999" stroke-width=".6"/></svg>
<svg style="left:520.5px;top:168px" width="20" height="20" viewBox="0 0 20 20"><rect x="6.500" y="3.500" width="10" height="10" fill="none" stroke="#d8d8d8" stroke-width="1.100"/><rect x="3.500" y="6.500" width="10" height="10" fill="#2a2a2a" stroke="#d8d8d8" stroke-width="1.100"/></svg>
<svg style="left:541px;top:168px" width="20" height="20" viewBox="0 0 20 20"><path d="M6 10l8-5M6 10l8 5" stroke="#e8e8e8" stroke-width="1.500"/><circle cx="6" cy="10" r="2.300" fill="#2a2a2a" stroke="#e8e8e8" stroke-width="1.300"/><circle cx="14.500" cy="5" r="2.300" fill="#2a2a2a" stroke="#e8e8e8" stroke-width="1.300"/><circle cx="14.500" cy="15" r="2.300" fill="#2a2a2a" stroke="#e8e8e8" stroke-width="1.300"/></svg>
<svg style="left:6px;top:163px" width="32" height="32" viewBox="0 0 32 32"><g transform="translate(-1.500 -1.500) scale(1.120)"><path d="M11 6l0 15 3.600-3.100 2.900 6 2.900-1.300-2.900-5.900 4.800-.3z" fill="#b0141a" stroke="#f0d8d8" stroke-width=".8"/></g></svg>
<svg style="left:6px;top:200px" width="32" height="32" viewBox="0 0 32 32"><path d="M8 6c4-2 8-2 12 0M6 9c2 4 2 6-1 12 2 2 5 2 8 1M22 8c0 4 1 6 2 8" fill="none" stroke="#d0d0d0" stroke-width="1" stroke-dasharray="5 2"/><g transform="translate(16 12) scale(.8)"><path d="M0 0l0 15 3.600-3.100 2.900 6 2.900-1.300-2.900-5.900 4.800-.3z" fill="#b0141a" stroke="#f0d8d8" stroke-width=".8"/></g></svg>
<svg style="left:6px;top:237px" width="32" height="32" viewBox="0 0 32 32"><g transform="translate(1 1) scale(.9)"><ellipse cx="14" cy="22.500" rx="10.500" ry="6" fill="none" stroke="#d01820" stroke-width="2.200"/><path d="M31.500 4.500l-11.500 13" stroke="#8a5a2a" stroke-width="2.200"/><path d="M21 16.500c-5 1-6 5-11 6 5 2.500 12 0 13-4z" fill="#f0e8d0" stroke="#555" stroke-width=".5"/><rect x="6.4" y="15.9" width="3.200" height="3.200" fill="#f0e820" stroke="#555" stroke-width=".5"/><rect x="6.9" y="24.4" width="3.200" height="3.200" fill="#f0e820" stroke="#555" stroke-width=".5"/><rect x="14.4" y="25.9" width="3.200" height="3.200" fill="#f0e820" stroke="#555" stroke-width=".5"/></g></svg>
<svg style="left:6px;top:274px" width="32" height="32" viewBox="0 0 32 32"><path d="M12 5l-5 16c2 1.500 5 1.500 7 0z" fill="#888" opacity=".5"/><path d="M15 4l-5 17c2 1.500 5 1.500 7 0z" fill="#999" opacity=".6"/><path d="M21 7l-6 17c3 2.500 9 2.500 12 0z" fill="url(#bcube)"/><path d="M5 22c5 3 9 4 14 5" stroke="#d01820" stroke-width="2.600" fill="none"/><path d="M15 23.500l8 4.500-8 2z" fill="#d01820"/></svg>
<svg style="left:6px;top:311px" width="32" height="32" viewBox="0 0 32 32"><circle cx="15" cy="11" r="8.5" fill="url(#bsph)"/><path d="M5 17c-2 5 4 9 12 9" fill="none" stroke="#c8181c" stroke-width="3"/><path d="M26 15c3 4 0 8-4 9.500" fill="none" stroke="#c8181c" stroke-width="3"/><path d="M15 22.500l6 4-6.500 3.500zM3 19l2.500-5.500 3.500 5z" fill="#d82226"/></svg>
<svg style="left:6px;top:348px" width="32" height="32" viewBox="0 0 32 32"><path d="M5 5l8 8M27 5l-8 8M5 28l8-8M27 28l-8-8" stroke="#c8181c" stroke-width="2.800"/><path d="M2.500 2.500l8 2-6 6zM29.500 2.500l-8 2 6 6zM2.500 30.500l8-2-6-6zM29.500 30.500l-8-2 6-6z" fill="#d82226"/><path d="M9 12l7 -1.75l7 1.75l-7 1.75z" fill="#a8d0f2" stroke="#2c66a8" stroke-width=".4"/><path d="M9 12l7 1.75v7.700000000000001l-7 -1.75z" fill="#5b9ad8" stroke="#2c66a8" stroke-width=".4"/><path d="M16 13.75l7 -1.75v7.700000000000001l-7 1.75z" fill="#3d7fc0" stroke="#2c66a8" stroke-width=".4"/></svg>
<svg style="left:6px;top:385px" width="32" height="32" viewBox="0 0 32 32"><path d="M4 8l12-4 11 3v16l-11 5-12-4z" fill="none" stroke="#c8c8c8" stroke-width="1.100"/><path d="M4 8l12 3 11-4M16 11v17" stroke="#c8c8c8" stroke-width="1.100" fill="none"/><circle cx="16" cy="17" r="5" fill="url(#bsph)"/><path d="M16 16V6" stroke="#20c030" stroke-width="2"/><path d="M16 3l-2.500 4h5z" fill="#20c030"/><path d="M17 19l7 3.500" stroke="#d01820" stroke-width="2"/><path d="M9 21l6-3" stroke="#2030e0" stroke-width="2"/><rect x="2.5" y="6.5" width="3" height="3" fill="#f0e820" stroke="#555" stroke-width=".5"/><rect x="14.5" y="2.5" width="3" height="3" fill="#f0e820" stroke="#555" stroke-width=".5"/><rect x="25.5" y="5.5" width="3" height="3" fill="#f0e820" stroke="#555" stroke-width=".5"/><rect x="2.5" y="22.5" width="3" height="3" fill="#f0e820" stroke="#555" stroke-width=".5"/><rect x="14.5" y="26.5" width="3" height="3" fill="#f0e820" stroke="#555" stroke-width=".5"/><rect x="25.5" y="21.5" width="3" height="3" fill="#f0e820" stroke="#555" stroke-width=".5"/></svg>
<svg style="left:6px;top:422px" width="32" height="32" viewBox="0 0 32 32"><path d="M5 17l8-3 7 1 7-3 2 10-8 4-8-1-7 3z" fill="url(#bcube)" stroke="#2c5a98" stroke-width=".5"/><path d="M12.500 14.500l1.500 10M20 15l1 10.500M5.500 20.500l7-2.500 8 1 8-3.500" stroke="#d6ecfb" stroke-width=".9" fill="none"/><path d="M16 14V6" stroke="#d01820" stroke-width="1.800"/><path d="M16 2l-3 5h6z" fill="#d01820"/><rect x="14.5" y="12.0" width="3" height="3" fill="#f0e820" stroke="#555" stroke-width=".5"/><rect x="9.5" y="18.5" width="3" height="3" fill="#f0e820" stroke="#555" stroke-width=".5"/><rect x="19.5" y="18.5" width="3" height="3" fill="#f0e820" stroke="#555" stroke-width=".5"/></svg>
<svg style="left:6px;top:459px" width="32" height="32" viewBox="0 0 32 32"><circle cx="16" cy="19" r="4.5" fill="url(#bsph)"/><path d="M9 18h5v3h-5z" fill="#111"/><path d="M16 17V9" stroke="#20c030" stroke-width="2.400"/><path d="M16 4l-3.500 6.500h7z" fill="#20c030"/><path d="M13 19.500H8" stroke="#2040e0" stroke-width="2.400"/><path d="M2.500 19.500l6.500-3.500v7z" fill="#2040e0"/><path d="M19 21.500l4 3" stroke="#d01820" stroke-width="2.400"/><path d="M28 28l-7.500-1.500 4.500-5.500z" fill="#d01820"/></svg>
<svg style="left:6px;top:544px" width="32" height="32" viewBox="0 0 32 32"><rect x="0" y="0" width="32" height="32" fill="url(#lbtn)" stroke="#555" stroke-width=".5"/><g transform="translate(16 13) scale(1.05)"><path d="M-10 0l10-5 10 5-10 5z" fill="none" stroke="#333" stroke-width="1.200"/><path d="M-5 -2.500l10 5M5 -2.500l-10 5" stroke="#333" stroke-width="1.100"/></g><g transform="translate(7 25) scale(1.2)"><path d="M0 0v-5" stroke="#20a020" stroke-width="1.600"/><path d="M0 0l-3.500 3" stroke="#2030e0" stroke-width="1.600"/><path d="M0 0l4 2.500" stroke="#e01c1c" stroke-width="1.600"/></g></svg>
<svg style="left:6px;top:582px" width="32" height="32" viewBox="0 0 32 32"><rect x="0" y="0" width="15.5" height="15.5" fill="url(#lbtn)" stroke="#555" stroke-width=".5"/><rect x="16.5" y="0" width="15.5" height="15.5" fill="url(#lbtn)" stroke="#555" stroke-width=".5"/><rect x="0" y="16.5" width="15.5" height="15.5" fill="url(#lbtn)" stroke="#555" stroke-width=".5"/><rect x="16.5" y="16.5" width="15.5" height="15.5" fill="url(#lbtn)" stroke="#555" stroke-width=".5"/><path d="M2.8 7.8h10M7.8 2.8v10" stroke="#222" stroke-width="1.200"/><path d="M2.8 24.2h10M7.8 19.2v10" stroke="#222" stroke-width="1.200"/><path d="M19.2 24.2h10M24.2 19.2v10" stroke="#222" stroke-width="1.200"/><g transform="translate(24.5 6) scale(0.55)"><path d="M-10 0l10-5 10 5-10 5z" fill="none" stroke="#333" stroke-width="1.200"/><path d="M-5 -2.500l10 5M5 -2.500l-10 5" stroke="#333" stroke-width="1.100"/></g><g transform="translate(20 13) scale(0.7)"><path d="M0 0v-5" stroke="#20a020" stroke-width="1.600"/><path d="M0 0l-3.500 3" stroke="#2030e0" stroke-width="1.600"/><path d="M0 0l4 2.500" stroke="#e01c1c" stroke-width="1.600"/></g></svg>
<svg style="left:6px;top:620px" width="32" height="32" viewBox="0 0 32 32"><rect x="0" y="0" width="15" height="32" fill="#2e2e2e"/><path d="M3 5h2M6.500 5h6" stroke="#e0e0e0" stroke-width="1"/><path d="M3 8.5h2M6.500 8.5h6" stroke="#e0e0e0" stroke-width="1"/><path d="M3 12h2M6.500 12h6" stroke="#e0e0e0" stroke-width="1"/><path d="M3 15.5h2M6.500 15.5h6" stroke="#e0e0e0" stroke-width="1"/><path d="M3 19h2M6.500 19h6" stroke="#e0e0e0" stroke-width="1"/><path d="M3 22.5h2M6.500 22.5h6" stroke="#e0e0e0" stroke-width="1"/><rect x="16.5" y="0" width="15.5" height="32" fill="url(#lbtn)" stroke="#555" stroke-width=".5"/><g transform="translate(24.3 14) scale(0.6)"><path d="M-10 0l10-5 10 5-10 5z" fill="none" stroke="#333" stroke-width="1.200"/><path d="M-5 -2.500l10 5M5 -2.500l-10 5" stroke="#333" stroke-width="1.100"/></g><g transform="translate(20 27) scale(0.8)"><path d="M0 0v-5" stroke="#20a020" stroke-width="1.600"/><path d="M0 0l-3.500 3" stroke="#2030e0" stroke-width="1.600"/><path d="M0 0l4 2.500" stroke="#e01c1c" stroke-width="1.600"/></g></svg>
<svg style="left:6px;top:658px" width="32" height="32" viewBox="0 0 32 32"><rect x="0" y="0" width="32" height="15" fill="url(#lbtn)" stroke="#555" stroke-width=".5"/><g transform="translate(17 6) scale(0.9)"><path d="M-10 0l10-5 10 5-10 5z" fill="none" stroke="#333" stroke-width="1.200"/><path d="M-5 -2.500l10 5M5 -2.500l-10 5" stroke="#333" stroke-width="1.100"/></g><g transform="translate(4 12) scale(0.7)"><path d="M0 0v-5" stroke="#20a020" stroke-width="1.600"/><path d="M0 0l-3.500 3" stroke="#2030e0" stroke-width="1.600"/><path d="M0 0l4 2.500" stroke="#e01c1c" stroke-width="1.600"/></g><rect x="0" y="16.5" width="32" height="15.5" fill="url(#lbtn)" stroke="#555" stroke-width=".5"/><path d="M6 16.5v15.5" stroke="#222" stroke-width=".8"/><path d="M13 16.5v15.5" stroke="#e01c1c" stroke-width="1"/><path d="M0 26.575000000000003h32" stroke="#222" stroke-width=".8"/><path d="M7 28.59C10 17.5 14 17.5 17 25.799999999999997S22 31.0 25 25.799999999999997 29 21.15 31.5 21.925" fill="none" stroke="#4a6aa0" stroke-width="1.500"/><path d="M1.5 20.0h3" stroke="#2030e0" stroke-width="1.200"/><path d="M1.5 23.5h3" stroke="#e01c1c" stroke-width="1.200"/><path d="M1.5 27.0h3" stroke="#20a020" stroke-width="1.200"/></svg>
<svg style="left:6px;top:696px" width="32" height="32" viewBox="0 0 32 32"><rect x="0" y="0" width="3" height="32" fill="#888"/><rect x="3.500" y="0" width="12" height="32" fill="#2e2e2e"/><rect x="5" y="3" width="2.500" height="2.500" fill="none" stroke="#ccc" stroke-width=".6"/><rect x="11" y="3" width="2.500" height="2.500" fill="none" stroke="#ccc" stroke-width=".6"/><rect x="5" y="7" width="3" height="3" fill="none" stroke="#f06060" stroke-width="1"/><rect x="11" y="7" width="3" height="3" fill="none" stroke="#f06060" stroke-width="1"/><rect x="5" y="11.500" width="3" height="3" fill="none" stroke="#40d040" stroke-width="1"/><rect x="11" y="11.500" width="3" height="3" fill="none" stroke="#40d040" stroke-width="1"/><rect x="6.500" y="20" width="6" height="6" fill="none" stroke="#40d040" stroke-width="1.200"/><path d="M6 29h7" stroke="#ccc" stroke-width=".8"/><rect x="16.5" y="0" width="15.5" height="32" fill="url(#lbtn)" stroke="#555" stroke-width=".5"/><g transform="translate(24.3 14) scale(0.6)"><path d="M-10 0l10-5 10 5-10 5z" fill="none" stroke="#333" stroke-width="1.200"/><path d="M-5 -2.500l10 5M5 -2.500l-10 5" stroke="#333" stroke-width="1.100"/></g><g transform="translate(20 27) scale(0.8)"><path d="M0 0v-5" stroke="#20a020" stroke-width="1.600"/><path d="M0 0l-3.500 3" stroke="#2030e0" stroke-width="1.600"/><path d="M0 0l4 2.500" stroke="#e01c1c" stroke-width="1.600"/></g></svg>
<svg style="left:6px;top:734px" width="32" height="32" viewBox="0 0 32 32"><rect x="0" y="0" width="15" height="15" fill="url(#lbtn)" stroke="#555" stroke-width=".5"/><g transform="translate(7.5 5.5) scale(0.55)"><path d="M-10 0l10-5 10 5-10 5z" fill="none" stroke="#333" stroke-width="1.200"/><path d="M-5 -2.500l10 5M5 -2.500l-10 5" stroke="#333" stroke-width="1.100"/></g><g transform="translate(4 11.5) scale(0.7)"><path d="M0 0v-5" stroke="#20a020" stroke-width="1.600"/><path d="M0 0l-3.500 3" stroke="#2030e0" stroke-width="1.600"/><path d="M0 0l4 2.500" stroke="#e01c1c" stroke-width="1.600"/></g><rect x="16" y="0" width="16" height="15" fill="#2e2e2e"/><rect x="18" y="2.500" width="6" height="2.500" fill="none" stroke="#e8e060" stroke-width=".9"/><rect x="21" y="6.500" width="6" height="2.500" fill="none" stroke="#ccc" stroke-width=".7"/><rect x="24" y="10.500" width="6" height="2.500" fill="none" stroke="#ccc" stroke-width=".7"/><rect x="0" y="16.5" width="32" height="15.5" fill="url(#lbtn)" stroke="#555" stroke-width=".5"/><path d="M6 16.5v15.5" stroke="#222" stroke-width=".8"/><path d="M13 16.5v15.5" stroke="#e01c1c" stroke-width="1"/><path d="M0 26.575000000000003h32" stroke="#222" stroke-width=".8"/><path d="M7 28.59C10 17.5 14 17.5 17 25.799999999999997S22 31.0 25 25.799999999999997 29 21.15 31.5 21.925" fill="none" stroke="#4a6aa0" stroke-width="1.500"/><path d="M1.5 20.0h3" stroke="#2030e0" stroke-width="1.200"/><path d="M1.5 23.5h3" stroke="#e01c1c" stroke-width="1.200"/><path d="M1.5 27.0h3" stroke="#20a020" stroke-width="1.200"/></svg>
</body></html>
